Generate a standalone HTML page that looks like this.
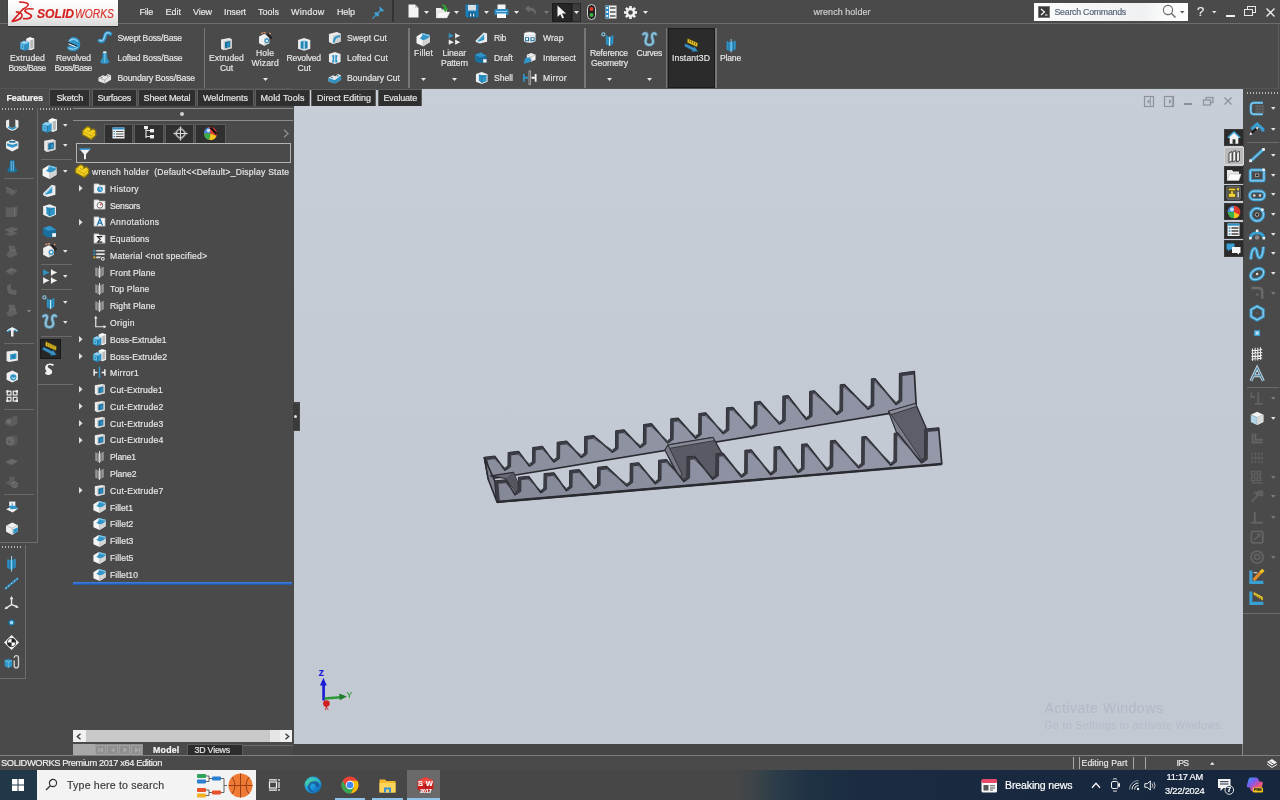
<!DOCTYPE html>
<html><head><meta charset="utf-8"><title>SOLIDWORKS - wrench holder</title>
<style>
html,body{margin:0;padding:0;}
body{width:1280px;height:800px;overflow:hidden;position:relative;background:#4a4a4a;font-family:"Liberation Sans",sans-serif;}
#root{position:absolute;left:0;top:0;width:1280px;height:800px;overflow:hidden;background:#4a4a4a;will-change:transform;}
#root div,#root span.t,#root svg{position:absolute;}
span.t{white-space:pre;display:block;-webkit-text-stroke:0.18px currentColor;}
svg{overflow:visible;}
</style></head><body><div id="root">
<div style="left:293.6px;top:89px;width:949px;height:654.8px;background:linear-gradient(180deg,#c8ced8 0%,#c4cad4 50%,#c3c9d3 100%);"></div>
<div style="left:422px;top:88.5px;width:820.6px;height:1px;background:#c5cbd5;"></div>
<div style="left:293px;top:402px;width:6.8px;height:28.7px;background:#474747;"></div>
<div style="left:294.6px;top:414.3px;width:3.4px;height:3.4px;background:#e2e2e2;border-radius:50%;"></div>
<svg style="left:0px;top:0px;" width="1280" height="800" viewBox="0 0 1280 800"><defs><linearGradient id="gf" x1="0" y1="0" x2="1" y2="0"><stop offset="0" stop-color="#858897"/><stop offset=".45" stop-color="#8d90a0"/><stop offset="1" stop-color="#9598a8"/></linearGradient><linearGradient id="gb" x1="0" y1="0" x2="1" y2="0"><stop offset="0" stop-color="#8a8d9c"/><stop offset=".5" stop-color="#9194a4"/><stop offset="1" stop-color="#8f92a2"/></linearGradient></defs><polygon points="488.5,479.0 484.4,457.5 494.7,456.3 504.9,470.1 508.3,466.8 508.5,452.8 518.4,451.6 529.4,466.0 532.8,462.7 533.0,447.8 542.4,446.7 553.9,461.9 557.3,458.6 557.5,442.5 566.5,441.4 581.4,457.3 584.8,454.0 585.0,436.9 593.5,435.9 612.4,452.1 615.8,448.8 616.0,431.0 623.9,430.1 640.3,447.4 643.7,444.1 643.9,424.8 651.3,423.9 667.5,442.8 670.9,439.5 671.1,419.2 678.0,418.4 695.6,438.1 699.0,434.8 699.2,413.8 705.6,413.0 723.2,433.5 726.6,430.2 726.8,408.2 732.7,407.5 751.2,428.8 754.6,425.5 754.8,402.3 760.1,401.7 779.6,424.0 783.0,420.7 783.2,396.4 788.0,395.8 806.4,419.5 809.8,416.2 810.0,391.5 814.3,391.0 836.9,414.4 840.3,411.1 840.5,385.2 844.3,384.7 868.1,409.1 871.5,405.8 871.7,379.2 874.9,378.8 896.1,404.4 899.5,401.1 899.7,373.5 914.3,371.7 916.2,405.0 915.8,409.2 516.0,475.0 488.5,479.0" fill="url(#gb)" stroke="#2a2b31" stroke-width="1.7" stroke-linejoin="round"/><path d="M489.7,478.7 L485.6,458.7 L495.0,457.5 M505.7,469.0 L509.5,466.0 L509.7,454.0 L518.7,452.8 M530.2,464.9 L534.0,461.9 L534.2,449.0 L542.7,447.9 M554.7,460.8 L558.5,457.8 L558.7,443.7 L566.8,442.6 M582.2,456.2 L586.0,453.2 L586.2,438.1 L593.8,437.1 M613.2,451.0 L617.0,448.0 L617.2,432.2 L624.2,431.3 M641.1,446.3 L644.9,443.3 L645.1,426.0 L651.6,425.1 M668.3,441.7 L672.1,438.7 L672.3,420.4 L678.3,419.6 M696.4,437.0 L700.2,434.0 L700.4,415.0 L705.9,414.2 M724.0,432.4 L727.8,429.4 L728.0,409.4 L733.0,408.7 M752.0,427.7 L755.8,424.7 L756.0,403.5 L760.4,402.9 M780.4,422.9 L784.2,419.9 L784.4,397.6 L788.3,397.0 M807.2,418.4 L811.0,415.4 L811.2,392.7 L814.6,392.2 M837.7,413.3 L841.5,410.3 L841.7,386.4 L844.6,385.9 M868.9,408.0 L872.7,405.0 L872.9,380.4 L875.2,380.0 M896.9,403.3 L900.7,400.3 L900.9,374.7 L913.8,372.9" fill="none" stroke="#3a3b43" stroke-width="3.2" stroke-linejoin="miter"/><path d="M493.7,458.3 L505.1,468.2 M517.4,453.6 L529.6,464.1 M541.4,448.7 L554.1,460.0 M565.5,443.4 L581.6,455.4 M592.5,437.9 L612.6,450.2 M622.9,432.1 L640.5,445.5 M650.3,425.9 L667.7,440.9 M677.0,420.4 L695.8,436.2 M704.6,415.0 L723.4,431.6 M731.7,409.5 L751.4,426.9 M759.1,403.7 L779.8,422.1 M787.0,397.8 L806.6,417.6 M813.3,393.0 L837.1,412.5 M843.3,386.7 L868.3,407.2 M873.9,380.8 L896.3,402.5" fill="none" stroke="#4a4b55" stroke-width=".9"/><polygon points="484.4,457.8 494.8,481 497,502 488.3,479.5" fill="#7c7e8b" stroke="#2a2b31" stroke-width="1.6" stroke-linejoin="round"/><polygon points="490.5,475.8 513.5,472.3 520.8,491 518,494.5 505.5,478.5" fill="#6a6b76" stroke="#2a2b31" stroke-width="1.2" stroke-linejoin="round"/><polygon points="505.5,478.5 513.5,472.3 520.8,491 518,494.5" fill="#55565f"/><polygon points="665,450 668,445 713,437.5 721.5,452.5 722,482 681,482" fill="#595a64" stroke="#2a2b31" stroke-width="1.3" stroke-linejoin="round"/><polygon points="668,445 713,437.5 714.6,440.6 669.5,448.3" fill="#878997" stroke="#2a2b31" stroke-width=".8"/><polygon points="665,450 668,445 669.5,448.3 682,474 680,478" fill="#777986" stroke="#2a2b31" stroke-width=".8"/><polygon points="888.5,411.3 915.5,403.5 926,427.5 927.8,456 920,461.5 896.5,432" fill="#5d5e69" stroke="#2a2b31" stroke-width="1.3" stroke-linejoin="round"/><polygon points="888.5,411.3 915.5,403.5 916.8,406.3 891,414.6" fill="#8b8d9b" stroke="#2a2b31" stroke-width=".8"/><polygon points="888.5,411.3 891,414.6 921.5,459.5 920,461.5 896.5,432" fill="#7b7d8a" stroke="#2a2b31" stroke-width=".8"/><polygon points="497.0,502.0 495.6,481.2 505.9,480.2 515.1,494.7 518.5,491.4 518.7,477.5 528.6,476.5 540.8,492.6 544.2,489.3 544.4,473.9 553.8,473.0 566.4,490.6 569.8,487.3 570.0,470.8 579.0,469.9 594.4,488.4 597.8,485.1 598.0,467.5 606.5,466.7 627.0,485.9 630.4,482.6 630.6,463.8 638.5,463.0 655.3,483.6 658.7,480.3 658.9,460.5 666.3,459.8 683.9,481.4 687.3,478.1 687.5,457.2 694.4,456.5 712.8,479.1 716.2,475.8 716.4,454.0 722.8,453.4 741.6,476.9 745.0,473.6 745.2,450.6 751.1,450.0 770.8,474.6 774.2,471.3 774.4,447.3 779.7,446.8 798.4,472.4 801.8,469.1 802.0,444.6 806.8,444.1 827.1,470.1 830.5,466.8 830.7,441.0 835.0,440.6 858.6,467.7 862.0,464.4 862.2,437.2 866.0,436.8 890.9,465.1 894.3,461.8 894.5,433.5 897.7,433.2 921.6,462.7 925.0,459.4 925.2,429.3 938.7,428.2 941.8,464.0 497.0,502.0" fill="url(#gf)" stroke="#2a2b31" stroke-width="1.7" stroke-linejoin="round"/><path d="M498.2,501.7 L496.8,482.4 L506.2,481.4 M515.9,493.6 L519.7,490.6 L519.9,478.7 L528.9,477.7 M541.6,491.5 L545.4,488.5 L545.6,475.1 L554.1,474.2 M567.2,489.5 L571.0,486.5 L571.2,472.0 L579.3,471.1 M595.2,487.3 L599.0,484.3 L599.2,468.7 L606.8,467.9 M627.8,484.8 L631.6,481.8 L631.8,465.0 L638.8,464.2 M656.1,482.5 L659.9,479.5 L660.1,461.7 L666.6,461.0 M684.7,480.3 L688.5,477.3 L688.7,458.4 L694.7,457.7 M713.6,478.0 L717.4,475.0 L717.6,455.2 L723.1,454.6 M742.4,475.8 L746.2,472.8 L746.4,451.8 L751.4,451.2 M771.6,473.5 L775.4,470.5 L775.6,448.5 L780.0,448.0 M799.2,471.3 L803.0,468.3 L803.2,445.8 L807.1,445.3 M827.9,469.0 L831.7,466.0 L831.9,442.2 L835.3,441.8 M859.4,466.6 L863.2,463.6 L863.4,438.4 L866.3,438.0 M891.7,464.0 L895.5,461.0 L895.7,434.7 L898.0,434.4 M922.4,461.6 L926.2,458.6 L926.4,430.5 L938.2,429.4" fill="none" stroke="#3a3b43" stroke-width="3.2" stroke-linejoin="miter"/><path d="M504.9,482.2 L515.3,492.8 M527.6,478.5 L541.0,490.7 M552.8,475.0 L566.6,488.7 M578.0,471.9 L594.6,486.5 M605.5,468.7 L627.2,484.0 M637.5,465.0 L655.5,481.7 M665.3,461.8 L684.1,479.5 M693.4,458.5 L713.0,477.2 M721.8,455.4 L741.8,475.0 M750.1,452.0 L771.0,472.7 M778.7,448.8 L798.6,470.5 M805.8,446.1 L827.3,468.2 M834.0,442.6 L858.8,465.8 M865.0,438.8 L891.1,463.2 M896.7,435.2 L921.8,460.8" fill="none" stroke="#4a4b55" stroke-width=".9"/><path d="M497,502 L941.8,464" stroke="#2a2b31" stroke-width="2.4"/></svg>
<svg style="left:314px;top:664px;" width="40" height="50" viewBox="0 0 40 50"><path d="M9.6 36.5 V20" stroke="#1c1cd8" stroke-width="2.7"/><path d="M9.4 13.8 L6 21.5 H12.8Z" fill="#1c1cd8"/><path d="M10.5 34.6 L26.5 33.2" stroke="#2b9a36" stroke-width="2.5"/><path d="M32.8 32.4 L25.2 29.6 L25.8 36.2Z" fill="#1f7a2b"/><circle cx="12.4" cy="39.6" r="3.3" fill="#d21f1f"/><path d="M12.8 42 L11.3 46 M11.6 42 L14.3 46" stroke="#d21f1f" stroke-width=".9"/></svg>
<span class="t" style="left:318.70px;top:667.90px;font-size:8.5px;line-height:10.20px;color:#1c1cd8;font-weight:bold;">Z</span>
<span class="t" style="left:346.47px;top:690.20px;font-size:8.5px;line-height:10.20px;color:#2b9a36;">Y</span>
<span class="t" style="left:1044.50px;top:700.48px;font-size:14.2px;line-height:17.04px;color:#b3b9c4;letter-spacing:0.434px;-webkit-text-stroke:0;">Activate Windows</span>
<span class="t" style="left:1044.50px;top:719.82px;font-size:10.3px;line-height:12.36px;color:#b5bbc6;letter-spacing:0.483px;-webkit-text-stroke:0;">Go to Settings to activate Windows.</span>
<svg style="left:1144px;top:96px;" width="10" height="11" viewBox="0 0 10 11"><rect x=".5" y=".5" width="9" height="10" fill="none" stroke="#8c939d" stroke-width="1.25"/><path d="M5.5 3 L3 5.5 L5.5 8Z" fill="#8c939d"/><path d="M6.5 1V10" stroke="#8c939d" stroke-width=".8"/></svg>
<svg style="left:1163.5px;top:96px;" width="10" height="11" viewBox="0 0 10 11"><rect x=".5" y=".5" width="9" height="10" fill="none" stroke="#8c939d" stroke-width="1.25"/><path d="M5 3 L7.5 5.5 L5 8Z" fill="#8c939d"/><path d="M8.3 1V10" stroke="#8c939d" stroke-width=".8"/></svg>
<div style="left:1184.3px;top:103.2px;width:8px;height:2px;background:#8a919b;"></div>
<svg style="left:1203px;top:96.5px;" width="11" height="9" viewBox="0 0 11 9"><rect x="3" y=".5" width="7" height="5" fill="none" stroke="#8c939d" stroke-width="1.25"/><rect x=".5" y="3" width="7" height="5" fill="#c5cbd5" stroke="#8c939d" stroke-width="1.25"/></svg>
<svg style="left:1224px;top:97px;" width="8" height="8" viewBox="0 0 8 8"><path d="M.5 .5 L7.5 7.5 M7.5 .5 L.5 7.5" stroke="#8c939d" stroke-width="1.25"/></svg>
<div style="left:0px;top:23px;width:1280px;height:1px;background:#6e6e6e;"></div>
<div style="left:8px;top:0px;width:110px;height:26px;background:linear-gradient(180deg,#ffffff 0%,#f6f6f6 45%,#d9d9d9 100%);box-shadow:0 1px 1px rgba(0,0,0,.35);"></div>
<svg style="left:11px;top:0.5px;" width="24" height="22" viewBox="0 0 24 22"><g fill="none" stroke="#d5201f" stroke-linecap="round" stroke-linejoin="round"><path d="M8.6 1 C13 1.2 17.6 2 17.2 3.6 C16.8 5.4 13.5 7.4 11.6 8.4" stroke-width="1.5"/><path d="M11.8 8.3 L1.2 20.4 C5 19.8 9.2 18.6 10.6 16 C12 13.4 10.6 11.6 5.4 10.9" stroke-width="1.6"/><path d="M22 8 C19 7.6 14.4 7.6 13.9 9.6 C13.4 11.8 20.6 12.6 20.4 15 C20.2 17.6 16 18 12.6 17.6" stroke-width="1.7"/></g></svg>
<span class="t" style="left:37.30px;top:7.46px;font-size:12.4px;line-height:14.88px;color:#d5201f;font-weight:bold;font-style:italic;transform:scaleX(0.9791);transform-origin:0 50%;">SOLID</span>
<span class="t" style="left:74.80px;top:7.46px;font-size:12.4px;line-height:14.88px;color:#d8302a;font-style:italic;transform:scaleX(0.8304);transform-origin:0 50%;">WORKS</span>
<span class="t" style="left:139.50px;top:6.60px;font-size:9px;line-height:10.80px;color:#e6e6e6;letter-spacing:-0.251px;">File</span>
<span class="t" style="left:165.50px;top:6.60px;font-size:9px;line-height:10.80px;color:#e6e6e6;letter-spacing:-0.002px;">Edit</span>
<span class="t" style="left:193.00px;top:6.60px;font-size:9px;line-height:10.80px;color:#e6e6e6;letter-spacing:-0.086px;">View</span>
<span class="t" style="left:224.00px;top:6.60px;font-size:9px;line-height:10.80px;color:#e6e6e6;letter-spacing:-0.085px;">Insert</span>
<span class="t" style="left:258.00px;top:6.60px;font-size:9px;line-height:10.80px;color:#e6e6e6;letter-spacing:-0.002px;">Tools</span>
<span class="t" style="left:291.00px;top:6.60px;font-size:9px;line-height:10.80px;color:#e6e6e6;letter-spacing:0.248px;">Window</span>
<span class="t" style="left:337.00px;top:6.60px;font-size:9px;line-height:10.80px;color:#e6e6e6;letter-spacing:-0.128px;">Help</span>
<svg style="left:371px;top:5px;" width="15" height="15" viewBox="0 0 16 16"><path d="M9.5 1.5 L14 6 L12.5 7 L10.5 6.5 L8 9 L8.5 11.5 L7 12.5 L3.5 9 L4.5 7.5 L7 8 L9.5 5.5 L9 3Z" fill="#3fa3d6"/><path d="M5.5 10.5 L1.5 14.5" stroke="#3fa3d6" stroke-width="1.3"/></svg>
<div style="left:392px;top:0px;width:2px;height:22px;background:#333;"></div>
<svg style="left:408px;top:4px;" width="11" height="14" viewBox="0 0 11 14"><path d="M.5 .5 H7 L10.5 4 V13.5 H.5Z" fill="#f4f4f4"/><path d="M7 .5 V4 H10.5Z" fill="#c9c9c9"/></svg>
<svg style="left:424px;top:10.5px;" width="5" height="3" viewBox="0 0 5 3"><path d="M0 0 H5 L2.5 3Z" fill="#e8e8e8"/></svg>
<svg style="left:435px;top:3px;" width="16" height="16" viewBox="0 0 16 16"><path d="M1 5 H6 L7 6.5 H12 V15 H1Z" fill="#ededed"/><path d="M3 9 H15 L12 15 H1Z" fill="#f8f8f8" stroke="#bbb" stroke-width=".4"/><path d="M7 1.5 C10 1.5 11.5 3 11.5 5.5 H13.5 L10.5 9 L7.5 5.5 H9.5 C9.5 4 8.5 3 7 3Z" fill="#32a336"/></svg>
<svg style="left:454px;top:10.5px;" width="5" height="3" viewBox="0 0 5 3"><path d="M0 0 H5 L2.5 3Z" fill="#e8e8e8"/></svg>
<svg style="left:465px;top:4px;" width="14" height="14" viewBox="0 0 14 14"><path d="M.5 .5 H13.5 V13.5 H2 L.5 12Z" fill="#1b7fb8"/><rect x="3" y="1" width="8" height="5.5" fill="#d9dfe4"/><rect x="3.5" y="8.5" width="7" height="5" fill="#0e5a88"/><rect x="5" y="9.5" width="1.3" height="3" fill="#dfe8ee"/><rect x="8" y="9.5" width="1.3" height="3" fill="#dfe8ee"/></svg>
<svg style="left:483.5px;top:10.5px;" width="5" height="3" viewBox="0 0 5 3"><path d="M0 0 H5 L2.5 3Z" fill="#e8e8e8"/></svg>
<svg style="left:494px;top:4px;" width="15" height="15" viewBox="0 0 15 15"><rect x="3.5" y=".5" width="8" height="5" fill="#f4f4f4"/><rect x=".5" y="5" width="14" height="6" rx="1" fill="#2b8cc4"/><rect x="3" y="9.5" width="9" height="4.5" fill="#fafafa"/><rect x="2" y="7" width="11" height="1" fill="#9fd2ee"/></svg>
<svg style="left:513.5px;top:10.5px;" width="5" height="3" viewBox="0 0 5 3"><path d="M0 0 H5 L2.5 3Z" fill="#e8e8e8"/></svg>
<svg style="left:524px;top:5px;" width="14" height="11" viewBox="0 0 14 11"><path d="M1 3.5 L5 .5 V2.5 C10 2.5 12.5 5 12 10 C11 7 9 5.5 5 5.5 V7.5Z" fill="#6b6b6b"/></svg>
<svg style="left:543.5px;top:10.5px;" width="5" height="3" viewBox="0 0 5 3"><path d="M0 0 H5 L2.5 3Z" fill="#7a7a7a"/></svg>
<div style="left:552px;top:3px;width:19.5px;height:18.5px;background:#262626;border:1px solid #1b1b1b;box-sizing:border-box;"></div>
<div style="left:571.5px;top:3px;width:9.5px;height:18.5px;background:#3c3c3c;border:1px solid #2b2b2b;box-sizing:border-box;"></div>
<svg style="left:557px;top:5px;" width="10" height="14" viewBox="0 0 10 14"><path d="M.5 .5 V12 L3.3 9.3 L5.3 13.5 L7 12.7 L5 8.6 H9Z" fill="#f6f6f6"/></svg>
<svg style="left:573.5px;top:10.5px;" width="5" height="3" viewBox="0 0 5 3"><path d="M0 0 H5 L2.5 3Z" fill="#e8e8e8"/></svg>
<svg style="left:587px;top:4px;" width="9" height="16" viewBox="0 0 9 16"><rect x=".5" y=".5" width="8" height="15" rx="4" fill="#222" stroke="#d8d8d8" stroke-width="1"/><circle cx="4.5" cy="5" r="2" fill="#e33a2c"/><circle cx="4.5" cy="11" r="2" fill="#3cb043"/></svg>
<svg style="left:605px;top:5px;" width="12" height="14" viewBox="0 0 12 14"><rect x=".5" y=".5" width="11" height="13" fill="#f0f0f0"/><rect x=".5" y=".5" width="3.5" height="13" fill="#2b8cc4"/><path d="M5 3h5.5M5 7h5.5M5 11h5.5" stroke="#555" stroke-width="1.4"/><rect x="1.3" y="2" width="1.8" height="1.8" fill="#fff"/><rect x="1.3" y="6" width="1.8" height="1.8" fill="#fff"/><rect x="1.3" y="10" width="1.8" height="1.8" fill="#fff"/></svg>
<svg style="left:624px;top:5.5px;" width="13" height="13" viewBox="0 0 13 13"><g transform="translate(6.5 6.5)"><g fill="#f2f2f2"><rect x="-1.3" y="-6.5" width="2.6" height="13"/><rect x="-1.3" y="-6.5" width="2.6" height="13" transform="rotate(45)"/><rect x="-1.3" y="-6.5" width="2.6" height="13" transform="rotate(90)"/><rect x="-1.3" y="-6.5" width="2.6" height="13" transform="rotate(135)"/><circle r="4.6"/></g><circle r="2.3" fill="#4a4a4a"/></g></svg>
<svg style="left:642.5px;top:10.5px;" width="5" height="3" viewBox="0 0 5 3"><path d="M0 0 H5 L2.5 3Z" fill="#e8e8e8"/></svg>
<span class="t" style="left:813.50px;top:6.60px;font-size:9px;line-height:10.80px;color:#cdcdcd;letter-spacing:0.036px;">wrench holder</span>
<div style="left:1034px;top:3px;width:153.5px;height:17.5px;background:linear-gradient(90deg,#fdfdfd 0%,#eef0f2 70%,#fbfbfb 85%,#fdfdfd 100%);"></div>
<div style="left:1038px;top:5.5px;width:12px;height:12px;background:#3a3a3a;border:1px solid #777;box-sizing:border-box;"></div>
<svg style="left:1040px;top:7.5px;" width="8" height="8" viewBox="0 0 8 8"><path d="M1 1 L4.5 4 L1 7 M5 7 H7.5" stroke="#fff" stroke-width="1.1" fill="none"/></svg>
<span class="t" style="left:1054.50px;top:6.72px;font-size:8.8px;line-height:10.56px;color:#566577;letter-spacing:-0.255px;">Search Commands</span>
<svg style="left:1162px;top:4px;" width="15" height="15" viewBox="0 0 15 15"><circle cx="6" cy="6" r="4.6" fill="none" stroke="#666" stroke-width="1.1"/><path d="M9.3 9.3 L13.5 13.5" stroke="#666" stroke-width="1.4"/></svg>
<svg style="left:1180.25px;top:10.7px;" width="4.5" height="2.6" viewBox="0 0 4.5 2.6"><path d="M0 0 H4.5 L2.25 2.6Z" fill="#555"/></svg>
<span class="t" style="left:1196.88px;top:4.20px;font-size:13px;line-height:15.60px;color:#f0f0f0;">?</span>
<svg style="left:1212.25px;top:10.7px;" width="4.5" height="2.6" viewBox="0 0 4.5 2.6"><path d="M0 0 H4.5 L2.25 2.6Z" fill="#e8e8e8"/></svg>
<div style="left:1226px;top:14.5px;width:8.5px;height:2px;background:#f0f0f0;"></div>
<svg style="left:1244px;top:6px;" width="12" height="10" viewBox="0 0 12 10"><rect x="3.5" y=".5" width="8" height="6" fill="none" stroke="#e8e8e8" stroke-width="1"/><rect x=".5" y="3.5" width="8" height="6" fill="#4a4a4a" stroke="#e8e8e8" stroke-width="1"/></svg>
<svg style="left:1266px;top:7.5px;" width="9" height="9" viewBox="0 0 9 9"><path d="M.5 .5 L8.5 8.5 M8.5 .5 L.5 8.5" stroke="#f0f0f0" stroke-width="1.3"/></svg>
<svg style="left:18.849px;top:35.849px;" width="16.302" height="16.302" viewBox="0 0 16 16"><path d="M7 3 L10.5 1.2 L15 2.5 L15 12.5 L11.5 14 L7 12.5Z" fill="#ececec"/><path d="M11 4.2 L14 3.3 V11.5 L11 12.7Z" fill="#b9b9b9"/><path d="M7 3 L10.5 1.2 L15 2.5 L11.5 4Z" fill="#fafafa"/><path d="M1 6.8 L4.8 4.6 L10 6 L10 12.3 L6 14.8 L1 13Z" fill="#3094c7"/><path d="M1 6.8 L6 8.3 L10 6 L4.8 4.6Z" fill="#8fd0ee"/><path d="M6 8.3V14.8" stroke="#1a6f9c" stroke-width=".7"/><path d="M2.2 8.5 L4.8 9.3 V12.8 L2.2 12Z" fill="none" stroke="#8fd0ee" stroke-width=".6"/></svg>
<span class="t" style="left:10.00px;top:52.84px;font-size:8.6px;line-height:10.32px;color:#e6e6e6;letter-spacing:0.072px;">Extruded</span>
<span class="t" style="left:8.50px;top:62.84px;font-size:8.6px;line-height:10.32px;color:#e6e6e6;letter-spacing:-0.401px;">Boss/Base</span>
<svg style="left:64.849px;top:35.849px;" width="16.302" height="16.302" viewBox="0 0 16 16"><path d="M8 1 C12.5 1 15 4.5 15 8.2 C15 12.5 11.5 15.5 7.5 15 C4 14.5 1.5 12.5 2 10.5 L8 8.5 L3 6.5 C3.5 3.5 5.5 1 8 1Z" fill="#3094c7"/><path d="M4 5 C6 2.5 10.5 2.5 12.5 5.5" stroke="#8fd0ee" stroke-width="1.3" fill="none"/><path d="M3.5 11.5 C6 13.5 10 13.5 12.5 11" stroke="#8fd0ee" stroke-width="1.1" fill="none"/><path d="M3 6.3 L11.5 9.8" stroke="#1c1c1c" stroke-width="1.1"/><path d="M3.3 7.6 L10.5 10.6" stroke="#eee" stroke-width="1"/></svg>
<span class="t" style="left:56.00px;top:52.84px;font-size:8.6px;line-height:10.32px;color:#e6e6e6;letter-spacing:-0.107px;">Revolved</span>
<span class="t" style="left:54.50px;top:62.84px;font-size:8.6px;line-height:10.32px;color:#e6e6e6;letter-spacing:-0.401px;">Boss/Base</span>
<svg style="left:96.748px;top:30.248px;" width="15.504" height="15.504" viewBox="0 0 16 16"><path d="M2.5 11 C7 13.5 7.5 9 8.5 5.5 C9.2 2.8 12 2.2 13.8 4" stroke="#2b8cc0" stroke-width="4" fill="none" stroke-linecap="round"/><path d="M2.5 10.6 C7 12.8 7.3 8.5 8.3 5.2 C9 2.6 11.8 2 13.5 3.6" stroke="#8fd0ee" stroke-width="1.5" fill="none" stroke-linecap="round"/></svg>
<span class="t" style="left:117.50px;top:33.14px;font-size:8.6px;line-height:10.32px;color:#e6e6e6;letter-spacing:-0.194px;">Swept Boss/Base</span>
<svg style="left:96.748px;top:50.248px;" width="15.504" height="15.504" viewBox="0 0 16 16"><path d="M6 2 h4 L10.5 8 L13 13 Q8 15.5 3 13 L5.5 8Z" fill="#3094c7"/><ellipse cx="8" cy="2.3" rx="2" ry=".9" fill="#eee"/><path d="M8 3v10" stroke="#8fd0ee" stroke-width=".8"/></svg>
<span class="t" style="left:117.50px;top:53.14px;font-size:8.6px;line-height:10.32px;color:#e6e6e6;letter-spacing:-0.151px;">Lofted Boss/Base</span>
<svg style="left:96.748px;top:69.748px;" width="15.504" height="15.504" viewBox="0 0 16 16"><path d="M1.5 8 L6 5.5 L9 6.5 L11 4 L14.5 5.5 L14.5 10 L8 14 L1.5 11.5Z" fill="#e6e6e6"/><path d="M1.5 8 L8 10.5 L14.5 5.5 M8 10.5V14" stroke="#9a9a9a" stroke-width=".7" fill="none"/><circle cx="5" cy="7.7" r=".8" fill="#777"/><circle cx="11" cy="6" r=".8" fill="#777"/></svg>
<span class="t" style="left:117.50px;top:72.64px;font-size:8.6px;line-height:10.32px;color:#e6e6e6;letter-spacing:-0.156px;">Boundary Boss/Base</span>
<div style="left:203.5px;top:28px;width:1.3px;height:60px;background:#767676;"></div>
<svg style="left:218.349px;top:35.849px;" width="16.302" height="16.302" viewBox="0 0 16 16"><path d="M3 3.5 L11 2 L13.5 3 L13.5 12 L5.5 14 L3 12.5Z" fill="#ececec"/><path d="M5.5 5 L13.5 3 V12 L5.5 14Z" fill="#cfcfcf"/><path d="M6.8 6 L12 4.8 V10.8 L6.8 12Z" fill="#1a6f9c"/><path d="M9 7 l2.2 -.4 v3.6 l-2.2 .4z" fill="#3094c7"/></svg>
<span class="t" style="left:209.00px;top:52.84px;font-size:8.6px;line-height:10.32px;color:#e6e6e6;letter-spacing:0.072px;">Extruded</span>
<span class="t" style="left:220.00px;top:62.84px;font-size:8.6px;line-height:10.32px;color:#e6e6e6;letter-spacing:-0.128px;">Cut</span>
<svg style="left:256.849px;top:30.849px;" width="16.302" height="16.302" viewBox="0 0 16 16"><path d="M2 5.5 L7 3 L12 5 L12 12 L7 14.5 L2 12Z" fill="#f0f0f0"/><path d="M7 7.5 L12 5 V12 L7 14.5Z" fill="#d4d4d4"/><circle cx="9.6" cy="9.6" r="2.4" fill="#3094c7"/><circle cx="9.6" cy="9.6" r="1.1" fill="#fff"/><path d="M10 3 L14.5 7.5" stroke="#222" stroke-width="2.4"/><path d="M4 2.5 l2-.8 M6.5 1.5 l2 .3 M12 2 l1.5 .8" stroke="#e8956a" stroke-width="1.2"/></svg>
<span class="t" style="left:256.00px;top:47.84px;font-size:8.6px;line-height:10.32px;color:#e6e6e6;letter-spacing:0.078px;">Hole</span>
<span class="t" style="left:251.50px;top:57.84px;font-size:8.6px;line-height:10.32px;color:#e6e6e6;letter-spacing:0.124px;">Wizard</span>
<svg style="left:262.5px;top:77.5px;" width="5" height="3" viewBox="0 0 5 3"><path d="M0 0 H5 L2.5 3Z" fill="#e8e8e8"/></svg>
<svg style="left:295.849px;top:35.849px;" width="16.302" height="16.302" viewBox="0 0 16 16"><path d="M2 4 L8 2 L14 4 V12.5 L8 14.5 L2 12.5Z" fill="#ececec"/><path d="M4.5 5.5 L8 4.5 L11.5 5.5 V12 L8 13 L4.5 12Z" fill="#3094c7"/><path d="M8 4.5V13" stroke="#fff" stroke-width=".8"/><path d="M6 6v6M10 6v6" stroke="#1a6f9c" stroke-width=".8"/></svg>
<span class="t" style="left:286.50px;top:52.84px;font-size:8.6px;line-height:10.32px;color:#e6e6e6;letter-spacing:-0.169px;">Revolved</span>
<span class="t" style="left:297.50px;top:62.84px;font-size:8.6px;line-height:10.32px;color:#e6e6e6;letter-spacing:0.039px;">Cut</span>
<svg style="left:326.748px;top:30.248px;" width="15.504" height="15.504" viewBox="0 0 16 16"><path d="M2 4 L10 2 L14 3.5 V12 L6 14.5 L2 12.5Z" fill="#ececec"/><path d="M6 6 L14 3.5 V12 L6 14.5Z" fill="#d0d0d0"/><path d="M7 13 C7 8 10 6.5 13.5 6.5" stroke="#3094c7" stroke-width="2.2" fill="none"/></svg>
<span class="t" style="left:347.00px;top:33.14px;font-size:8.6px;line-height:10.32px;color:#e6e6e6;letter-spacing:0.036px;">Swept Cut</span>
<svg style="left:326.748px;top:50.248px;" width="15.504" height="15.504" viewBox="0 0 16 16"><path d="M2 4 L8 2 L14 4 V12.5 L8 14.5 L2 12.5Z" fill="#ececec"/><path d="M5 5.5 h6 L10 9 L11 13 H5 L6 9Z" fill="#3094c7"/><path d="M8 5.5V13" stroke="#fff" stroke-width=".9"/></svg>
<span class="t" style="left:347.00px;top:53.14px;font-size:8.6px;line-height:10.32px;color:#e6e6e6;letter-spacing:0.132px;">Lofted Cut</span>
<svg style="left:326.748px;top:70.248px;" width="15.504" height="15.504" viewBox="0 0 16 16"><path d="M1.5 8 L6 5.5 L9 6.5 L11 4 L14.5 5.5 L14.5 10 L8 14 L1.5 11.5Z" fill="#e6e6e6"/><path d="M1.5 8 L8 10.5 L14.5 5.5 V10 L8 14 L1.5 11.5Z" fill="#3094c7"/><path d="M8 10.5V14" stroke="#1a6f9c" stroke-width=".7"/><circle cx="5" cy="7.7" r=".8" fill="#1a6f9c"/><circle cx="11" cy="6" r=".8" fill="#1a6f9c"/></svg>
<span class="t" style="left:347.00px;top:73.14px;font-size:8.6px;line-height:10.32px;color:#e6e6e6;letter-spacing:0.034px;">Boundary Cut</span>
<div style="left:408.3px;top:28px;width:1.3px;height:60px;background:#767676;"></div>
<svg style="left:415.149px;top:30.849px;" width="16.302" height="16.302" viewBox="0 0 16 16"><path d="M1.5 5.5 L7 2 L14.5 4 V11 L8 15 L1.5 12Z" fill="#f4f4f4"/><path d="M8 9 L14.5 6 V11 L8 15Z" fill="#d4d4d4"/><path d="M7 2 L14.5 4 Q14.8 7.5 8 9 L4.5 7.2 Q8 5.5 7 2Z" fill="#3094c7"/><path d="M7.5 3 L13.8 4.6" stroke="#8fd0ee" stroke-width="1"/><path d="M8 9V15" stroke="#b5b5b5" stroke-width=".6"/></svg>
<span class="t" style="left:414.00px;top:47.84px;font-size:8.6px;line-height:10.32px;color:#e6e6e6;letter-spacing:0.140px;">Fillet</span>
<svg style="left:420.8px;top:77.5px;" width="5" height="3" viewBox="0 0 5 3"><path d="M0 0 H5 L2.5 3Z" fill="#e8e8e8"/></svg>
<svg style="left:447.289px;top:32.289px;" width="14.022" height="14.022" viewBox="0 0 16 16"><path d="M2 1.5 h1.3 v.7 l4.6 2.1 l-4.6 2.1 v.7 h-1.3z" fill="#3094c7"/><path d="M9.3 1.5 h1.3 v.7 l4.6 2.1 l-4.6 2.1 v.7 h-1.3z" fill="#f2f2f2"/><path d="M2 8.8 h1.3 v.7 l4.6 2.1 l-4.6 2.1 v.7 h-1.3z" fill="#f2f2f2"/><path d="M9.3 8.8 h1.3 v.7 l4.6 2.1 l-4.6 2.1 v.7 h-1.3z" fill="#f2f2f2"/></svg>
<span class="t" style="left:442.50px;top:47.84px;font-size:8.6px;line-height:10.32px;color:#e6e6e6;letter-spacing:-0.068px;">Linear</span>
<span class="t" style="left:441.00px;top:57.84px;font-size:8.6px;line-height:10.32px;color:#e6e6e6;letter-spacing:-0.104px;">Pattern</span>
<svg style="left:451.8px;top:77.5px;" width="5" height="3" viewBox="0 0 5 3"><path d="M0 0 H5 L2.5 3Z" fill="#e8e8e8"/></svg>
<svg style="left:474.248px;top:30.248px;" width="15.504" height="15.504" viewBox="0 0 16 16"><path d="M2 10.5 L10 2.5 L13.5 3.5 V12 L6 14 L2 12.5Z" fill="#ececec"/><path d="M3.5 11 L10.5 4 L10.5 10 L5 12Z" fill="#3094c7"/><path d="M4 11 L10 5" stroke="#8fd0ee" stroke-width="1"/></svg>
<span class="t" style="left:494.00px;top:33.14px;font-size:8.6px;line-height:10.32px;color:#e6e6e6;letter-spacing:-0.302px;">Rib</span>
<svg style="left:473.248px;top:50.248px;" width="15.504" height="15.504" viewBox="0 0 16 16"><path d="M2 5 L8 2.5 L14 6 V13 L6 13.5 L2 11Z" fill="#1a6f9c"/><path d="M2 5 L8 2.5 L14 6 L7 7.5Z" fill="#3094c7"/><path d="M10.5 9.5 h3.5 v3.5 h-3.5z" fill="#f4f4f4"/></svg>
<span class="t" style="left:494.00px;top:53.14px;font-size:8.6px;line-height:10.32px;color:#e6e6e6;letter-spacing:0.073px;">Draft</span>
<svg style="left:474.248px;top:69.748px;" width="15.504" height="15.504" viewBox="0 0 16 16"><path d="M2 4 L8 2 L14 4.5 V12 L8 14.5 L2 12Z" fill="#f0f0f0"/><path d="M5 5 L13 5.5 V11.5 L8 13.5 L5 11Z" fill="#3094c7"/><path d="M8 7 L13 5.5 M8 7 V13.5 M8 7 L5 5" stroke="#1a6f9c" stroke-width=".7"/></svg>
<span class="t" style="left:494.00px;top:72.64px;font-size:8.6px;line-height:10.32px;color:#e6e6e6;letter-spacing:-0.025px;">Shell</span>
<svg style="left:522.248px;top:30.248px;" width="15.504" height="15.504" viewBox="0 0 16 16"><path d="M2 4 V11.5 Q8 15 14 11.5 V4Z" fill="#f0f0f0"/><ellipse cx="8" cy="4" rx="6" ry="2" fill="#fafafa" stroke="#bbb" stroke-width=".5"/><path d="M3 7.5 h4.3 v4 h-4.3z M8.7 7.5 h4.3 v4 h-4.3z" fill="#1a6f9c"/><path d="M4 8.3h2.2v2.4h-2.2z M9.8 8.3h2.2v2.4h-2.2z" fill="#e8f4fa"/></svg>
<span class="t" style="left:543.00px;top:33.14px;font-size:8.6px;line-height:10.32px;color:#e6e6e6;letter-spacing:0.027px;">Wrap</span>
<svg style="left:522.248px;top:50.248px;" width="15.504" height="15.504" viewBox="0 0 16 16"><path d="M5 5 L9.5 3 L14 5 V10 L9.5 12 L5 10Z" fill="#f0f0f0"/><path d="M5 5 L9.5 7 L14 5 M9.5 7V12" stroke="#aaa" stroke-width=".6" fill="none"/><path d="M1.5 14 L3.5 8 L8 7.5 L10 11 L6 13.5Z" fill="#3094c7"/></svg>
<span class="t" style="left:543.00px;top:53.14px;font-size:8.6px;line-height:10.32px;color:#e6e6e6;letter-spacing:0.002px;">Intersect</span>
<svg style="left:522.248px;top:70.248px;" width="15.504" height="15.504" viewBox="0 0 16 16"><path d="M1 4 h1.8 v3 h3.4 v2 h-3.4 v3 h-1.8z" fill="#3094c7"/><path d="M15 4 h-1.8 v3 h-3.4 v2 h3.4 v3 h1.8z" fill="#f2f2f2"/><path d="M7.2 .8 h1.6 v14.4 h-1.6z" fill="#4a4a4a" stroke="#e0e0e0" stroke-width=".6"/></svg>
<span class="t" style="left:543.00px;top:73.14px;font-size:8.6px;line-height:10.32px;color:#e6e6e6;letter-spacing:0.258px;">Mirror</span>
<div style="left:584.3px;top:28px;width:1.3px;height:60px;background:#767676;"></div>
<svg style="left:600.45px;top:30.95px;" width="17.1" height="17.1" viewBox="0 0 16 16"><path d="M5.5 4 L9 5.5 L12.5 3.5 V12 L9 14 L5.5 12.5Z" fill="#3094c7"/><path d="M9 5.5V14" stroke="#e8f4fa" stroke-width=".9"/><path d="M7.2 5v8M10.8 5v8" stroke="#1a6f9c" stroke-width=".7" stroke-dasharray="1.2 1"/><circle cx="3.2" cy="3.2" r="1.5" fill="none" stroke="#8fd0ee" stroke-width="1"/></svg>
<span class="t" style="left:590.00px;top:47.84px;font-size:8.6px;line-height:10.32px;color:#e6e6e6;letter-spacing:-0.187px;">Reference</span>
<span class="t" style="left:591.00px;top:57.84px;font-size:8.6px;line-height:10.32px;color:#e6e6e6;letter-spacing:-0.095px;">Geometry</span>
<svg style="left:606.5px;top:77.5px;" width="5" height="3" viewBox="0 0 5 3"><path d="M0 0 H5 L2.5 3Z" fill="#e8e8e8"/></svg>
<svg style="left:640.564px;top:31.164px;" width="16.872" height="16.872" viewBox="0 0 16 16"><path d="M2.2 3 C4 1.2 6.3 2.3 5.6 4.8 C4.8 7.5 3.6 9.2 4.6 11.5 C5.6 13.8 9.8 14 11.2 11.5 C12.4 9.2 10.2 7.2 10.4 4.8 C10.6 2.2 12.6 1.4 14 3" stroke="#4f7f99" stroke-width="3.3" fill="none" stroke-linecap="round"/><path d="M2.2 3 C4 1.2 6.3 2.3 5.6 4.8 C4.8 7.5 3.6 9.2 4.6 11.5 C5.6 13.8 9.8 14 11.2 11.5 C12.4 9.2 10.2 7.2 10.4 4.8 C10.6 2.2 12.6 1.4 14 3" stroke="#8ec0d8" stroke-width="1.9" fill="none" stroke-linecap="round"/></svg>
<span class="t" style="left:636.50px;top:47.84px;font-size:8.6px;line-height:10.32px;color:#e6e6e6;letter-spacing:-0.290px;">Curves</span>
<svg style="left:646.5px;top:77.5px;" width="5" height="3" viewBox="0 0 5 3"><path d="M0 0 H5 L2.5 3Z" fill="#e8e8e8"/></svg>
<div style="left:666.2px;top:28px;width:1.3px;height:60px;background:#767676;"></div>
<div style="left:668px;top:28px;width:46.5px;height:60px;background:#2b2b2b;border:1px solid #1c1c1c;box-sizing:border-box;"></div>
<div style="left:715.3px;top:28px;width:1.3px;height:60px;background:#767676;"></div>
<svg style="left:682.849px;top:36.849px;" width="16.302" height="16.302" viewBox="0 0 16 16"><path d="M4.5 1.5 L14.5 6 L14 9.8 L4 5.3Z" fill="#e9c62c" stroke="#5c4d08" stroke-width=".6"/><path d="M6.3 3.2v1.8M8.3 4.1v1.8M10.3 5v1.8M12.3 5.9v1.8" stroke="#4a3d00" stroke-width=".7"/><path d="M2.2 6.5 L10.5 10.5 L11.2 9.3 L14.5 14 L8.5 14.3 L9.3 13 L1.5 9Z" fill="#3b93c6" stroke="#1d5d85" stroke-width=".5"/></svg>
<span class="t" style="left:672.00px;top:52.84px;font-size:8.6px;line-height:10.32px;color:#e6e6e6;letter-spacing:0.132px;">Instant3D</span>
<svg style="left:722.849px;top:36.849px;" width="16.302" height="16.302" viewBox="0 0 16 16"><path d="M3.5 4 L8 5.5 L12.5 3.5 V12 L8 14 L3.5 12.5Z" fill="#3094c7"/><path d="M8 2V15" stroke="#8fd0ee" stroke-width="1"/><path d="M5.7 5v8M10.3 5v8" stroke="#1a6f9c" stroke-width=".7"/></svg>
<span class="t" style="left:720.00px;top:52.84px;font-size:8.6px;line-height:10.32px;color:#e6e6e6;letter-spacing:-0.199px;">Plane</span>
<div style="left:1278.2px;top:24px;width:1px;height:65px;background:#5c5c5c;"></div>
<div style="left:0px;top:88px;width:1279px;height:0.8px;background:#545454;"></div>
<div style="left:293px;top:88px;width:129.3px;height:2px;background:#4a4a4a;"></div>
<span class="t" style="left:6.50px;top:92.60px;font-size:9px;line-height:10.80px;color:#f4f4f4;letter-spacing:-0.127px;font-weight:bold;">Features</span>
<div style="left:49px;top:88.8px;width:41.3px;height:17px;background:#2f2f2f;border:1px solid #5e5e5e;border-bottom:none;box-sizing:border-box;"></div>
<span class="t" style="left:56.50px;top:92.60px;font-size:9px;line-height:10.80px;color:#e6e6e6;letter-spacing:-0.169px;">Sketch</span>
<div style="left:91.5px;top:88.8px;width:45px;height:17px;background:#2f2f2f;border:1px solid #5e5e5e;border-bottom:none;box-sizing:border-box;"></div>
<span class="t" style="left:97.50px;top:92.60px;font-size:9px;line-height:10.80px;color:#e6e6e6;letter-spacing:-0.252px;">Surfaces</span>
<div style="left:137.5px;top:88.8px;width:58.5px;height:17px;background:#2f2f2f;border:1px solid #5e5e5e;border-bottom:none;box-sizing:border-box;"></div>
<span class="t" style="left:143.50px;top:92.60px;font-size:9px;line-height:10.80px;color:#e6e6e6;letter-spacing:-0.094px;">Sheet Metal</span>
<div style="left:197px;top:88.8px;width:56.7px;height:17px;background:#2f2f2f;border:1px solid #5e5e5e;border-bottom:none;box-sizing:border-box;"></div>
<span class="t" style="left:203.00px;top:92.60px;font-size:9px;line-height:10.80px;color:#e6e6e6;letter-spacing:0.016px;">Weldments</span>
<div style="left:255.3px;top:88.8px;width:54.4px;height:17px;background:#2f2f2f;border:1px solid #5e5e5e;border-bottom:none;box-sizing:border-box;"></div>
<span class="t" style="left:260.50px;top:92.60px;font-size:9px;line-height:10.80px;color:#e6e6e6;letter-spacing:0.114px;">Mold Tools</span>
<div style="left:311.3px;top:88.8px;width:64.7px;height:17px;background:#2f2f2f;border:1px solid #5e5e5e;border-bottom:none;box-sizing:border-box;"></div>
<span class="t" style="left:317.00px;top:92.60px;font-size:9px;line-height:10.80px;color:#e6e6e6;letter-spacing:0.034px;">Direct Editing</span>
<div style="left:377.5px;top:88.8px;width:44.5px;height:17px;background:#2f2f2f;border:1px solid #5e5e5e;border-bottom:none;box-sizing:border-box;"></div>
<span class="t" style="left:383.50px;top:92.60px;font-size:9px;line-height:10.80px;color:#e6e6e6;letter-spacing:-0.191px;">Evaluate</span>
<div style="left:2px;top:107.8px;width:33px;height:2px;background-image:repeating-linear-gradient(90deg,#c8c8c8 0,#c8c8c8 1.3px,transparent 1.3px,transparent 3px);opacity:.85;"></div>
<div style="left:40px;top:107.8px;width:32px;height:2px;background-image:repeating-linear-gradient(90deg,#c8c8c8 0,#c8c8c8 1.3px,transparent 1.3px,transparent 3px);opacity:.85;"></div>
<div style="left:36.6px;top:108px;width:1.1px;height:435.3px;background:#6a6a6a;"></div>
<div style="left:0px;top:542.2px;width:37.5px;height:1.1px;background:#6f6f6f;"></div>
<svg style="left:3.735px;top:116.735px;" width="16.53" height="16.53" viewBox="0 0 16 16"><path d="M2 3.5 L5 2.5 L5 9 Q8 12.5 11 9 L11 2.5 L14 3.5 L14 10 Q8 16.5 2 10Z" fill="#ededed"/><path d="M5 9 Q8 12.5 11 9 L12.5 10 Q8 14.5 3.5 10Z" fill="#3094c7"/></svg>
<svg style="left:3.735px;top:137.035px;" width="16.53" height="16.53" viewBox="0 0 16 16"><path d="M2 4.5 L8 2.5 L14 4.5 V11 L8 14 L2 11Z" fill="#ededed"/><path d="M3 6 L8 7.5 L13 6 V8.5 L8 10.5 L3 8.5Z" fill="#3094c7"/><path d="M5 3.8 L11 3.8 L11 5.5 L5 5.5Z" fill="#1a6f9c"/></svg>
<svg style="left:3.735px;top:157.735px;" width="16.53" height="16.53" viewBox="0 0 16 16"><path d="M6 2 h4 L10.8 9 L13.5 12.5 Q8 15.5 2.5 12.5 L5.2 9Z" fill="#1a6f9c"/><path d="M7 3v9.5M9 3v9.5" stroke="#8fd0ee" stroke-width=".8"/></svg>
<div style="left:4px;top:178px;width:30px;height:1px;background:#6a6a6a;"></div>
<svg style="left:3.45px;top:182.95px;opacity:0.8;" width="17.1" height="17.1" viewBox="0 0 16 16"><path d="M3 4 L9 7 L13 6 L13 9 L8 12 L3 9Z" fill="#626262"/><path d="M3 4 L9 7 L9 10" stroke="#808080" stroke-width=".8" fill="none"/></svg>
<svg style="left:3.45px;top:203.45px;opacity:0.8;" width="17.1" height="17.1" viewBox="0 0 16 16"><path d="M2.5 4 H11 L13.5 2.5 V11 L11 13 H2.5Z" fill="#636363"/><path d="M11 4V13" stroke="#858585" stroke-width=".7"/></svg>
<svg style="left:3.45px;top:223.45px;opacity:0.8;" width="17.1" height="17.1" viewBox="0 0 16 16"><path d="M2 6 L9 3.5 L14 5.5 L7 8.5Z M2 10 L7 12.5 L14 9.5 L9 8Z" fill="#686868"/><path d="M2 6 L7 8.5 L14 5.5" stroke="#7f7f7f" stroke-width=".7" fill="none"/></svg>
<svg style="left:3.45px;top:242.95px;opacity:0.8;" width="17.1" height="17.1" viewBox="0 0 16 16"><path d="M5 2.5 L11 2.5 L12 7 L13.5 11 L6 14 L3 11 L6 7Z" fill="#676767"/><path d="M6 7 L12 7" stroke="#7e7e7e" stroke-width=".7"/></svg>
<svg style="left:3.45px;top:262.45px;opacity:0.8;" width="17.1" height="17.1" viewBox="0 0 16 16"><path d="M2 9 L8 5 L14 8 L8 12.5Z" fill="#626262"/><path d="M4 9 L8 6.5 L12 8.3 M5 10 L9 7.5" stroke="#7f7f7f" stroke-width=".7" fill="none"/></svg>
<svg style="left:3.45px;top:281.45px;opacity:0.8;" width="17.1" height="17.1" viewBox="0 0 16 16"><path d="M4 4 Q3 9 6 12 L12 13 L13 9 L8 8 Q7 5 7.5 3Z" fill="#686868"/></svg>
<svg style="left:3.45px;top:301.95px;opacity:0.8;" width="17.1" height="17.1" viewBox="0 0 16 16"><path d="M5 2.5 L11 2.5 L12 7 L13.5 11 L6 14 L3 11 L6 7Z" fill="#676767"/><path d="M6 7 L12 7" stroke="#7e7e7e" stroke-width=".7"/></svg>
<svg style="left:3.735px;top:322.235px;" width="16.53" height="16.53" viewBox="0 0 16 16"><path d="M2 9 Q8 2 14 9 L12 10 Q8 6 4 10Z" fill="#3094c7"/><path d="M3 8.5 Q8 3.5 13 8.5" stroke="#e8f4fa" stroke-width="1" fill="none"/><path d="M6.8 7.5 h2.4 v6.5 h-2.4z" fill="#f2f2f2"/><path d="M8 4.5 L11 8 H5Z" fill="#f2f2f2"/></svg>
<div style="left:4px;top:343px;width:30px;height:1px;background:#6a6a6a;"></div>
<svg style="left:3.735px;top:347.735px;" width="16.53" height="16.53" viewBox="0 0 16 16"><path d="M2.5 3.5 L11 2.5 L13.5 3.5 V12 L5 13.5 L2.5 12.5Z" fill="#ededed"/><path d="M6 6 L12 5 V10.5 L6 11.5Z" fill="#3094c7"/><path d="M10 6.5 L7.5 8.5 L10 10Z" fill="#1a6f9c"/></svg>
<svg style="left:3.735px;top:367.735px;" width="16.53" height="16.53" viewBox="0 0 16 16"><path d="M2.5 5 L8 2.5 L13.5 5 V11.5 L8 14 L2.5 11.5Z" fill="#f0f0f0"/><circle cx="9" cy="9" r="3" fill="#3094c7"/><path d="M8 9 a1.3 1.3 0 1 0 2.6 0" stroke="#fff" stroke-width=".9" fill="none"/></svg>
<svg style="left:4.875px;top:389.175px;" width="14.25" height="14.25" viewBox="0 0 16 16"><g fill="none" stroke="#f0f0f0" stroke-width="1.3"><rect x="2.5" y="2.5" width="4.2" height="4.2"/><rect x="9.3" y="2.5" width="4.2" height="4.2"/><rect x="2.5" y="9.3" width="4.2" height="4.2"/><rect x="9.3" y="9.3" width="4.2" height="4.2"/></g><path d="M1.5 1.5 h2.5v2.5h-2.5z M12 1.5 h2.5v2.5h-2.5z M1.5 12 h2.5v2.5h-2.5z M12 12h2.5v2.5h-2.5z" fill="#f0f0f0"/></svg>
<div style="left:4px;top:408.8px;width:30px;height:1px;background:#6a6a6a;"></div>
<svg style="left:3.45px;top:412.45px;opacity:0.8;" width="17.1" height="17.1" viewBox="0 0 16 16"><path d="M2 8 L6 5 L9 6 L9 3 L13.5 4.5 V11 L8 13.5 L2 11.5Z" fill="#626262"/><circle cx="5.5" cy="9" r="2" fill="#7c7c7c"/></svg>
<svg style="left:3.45px;top:432.45px;opacity:0.8;" width="17.1" height="17.1" viewBox="0 0 16 16"><path d="M3 5 L9 3 L13.5 4.5 V11.5 L8 13.5 L3 12Z" fill="#5f5f5f"/><circle cx="6.5" cy="8.5" r="3" fill="none" stroke="#808080" stroke-width="1"/><path d="M6.5 5.5v3h3" stroke="#808080" stroke-width=".9" fill="none"/></svg>
<svg style="left:3.45px;top:452.45px;opacity:0.8;" width="17.1" height="17.1" viewBox="0 0 16 16"><path d="M2 9.5 L8 6 L14 8.5 L8 12.5Z" fill="#696969"/><path d="M4 9.5 L9 6.8 M6 10.5 L11 7.6 M8 11.5 L13 8.5" stroke="#7e7e7e" stroke-width=".7"/></svg>
<svg style="left:3.45px;top:473.45px;opacity:0.8;" width="17.1" height="17.1" viewBox="0 0 16 16"><path d="M2 9 L6 7 L6 3.5 L11 3.5 L11 8 L13 9 L8 12.5Z" fill="#626262"/><circle cx="11" cy="11" r="2.6" fill="#5a5a5a" stroke="#858585" stroke-width=".9"/><path d="M9.3 9.3 L12.7 12.7" stroke="#858585" stroke-width=".9"/></svg>
<div style="left:4px;top:493.7px;width:30px;height:1px;background:#6a6a6a;"></div>
<svg style="left:3.735px;top:498.735px;" width="16.53" height="16.53" viewBox="0 0 16 16"><path d="M5 2.5 L11 2.5 L11 7 L5 7Z" fill="#f0f0f0"/><path d="M2 10 L7 7.5 L14 9 L8.5 13Z" fill="#f0f0f0"/><path d="M4.5 6.5 L11.5 6.5 L13.5 9.5 L6.5 10Z" fill="#3094c7"/><path d="M8 4v2.5" stroke="#3094c7" stroke-width="1"/></svg>
<svg style="left:3.735px;top:519.735px;" width="16.53" height="16.53" viewBox="0 0 16 16"><path d="M2 5.5 L8 2.5 L13.5 5 V11 L8 14.5 L2 11.5Z" fill="#f0f0f0"/><path d="M2 5.5 L8 8 L13.5 5 M8 8V14.5" stroke="#a9a9a9" stroke-width=".6" fill="none"/><path d="M9 9 L13.5 7 V11 L9 13.5Z" fill="#3094c7"/></svg>
<svg style="left:26.5px;top:309.75px;" width="4" height="2.5" viewBox="0 0 4 2.5"><path d="M0 0 H4 L2 2.5Z" fill="#8a8a8a"/></svg>
<div style="left:2px;top:546px;width:20px;height:2px;background-image:repeating-linear-gradient(90deg,#c8c8c8 0,#c8c8c8 1.3px,transparent 1.3px,transparent 3px);opacity:.85;"></div>
<div style="left:24.8px;top:545px;width:1.1px;height:134px;background:#6f6f6f;"></div>
<div style="left:0px;top:677.8px;width:25.8px;height:1.1px;background:#6f6f6f;"></div>
<svg style="left:3.45px;top:554.95px;" width="17.1" height="17.1" viewBox="0 0 16 16"><path d="M4 4 L8 5 L12 3.5 V11.5 L8 13.5 L4 12.5Z" fill="#3094c7"/><path d="M8 1V15.5" stroke="#8fd0ee" stroke-width="1"/><path d="M6 4.8v8M10 4.6v8" stroke="#1a6f9c" stroke-width=".7"/></svg>
<svg style="left:3.45px;top:574.95px;" width="17.1" height="17.1" viewBox="0 0 16 16"><path d="M2 13 L14 3" stroke="#2b84b6" stroke-width="2.4"/><path d="M2 13 L14 3" stroke="#c8e6f6" stroke-width=".8" stroke-dasharray="2 1.5"/></svg>
<svg style="left:3.45px;top:595.25px;" width="17.1" height="17.1" viewBox="0 0 16 16"><path d="M8 9 V2.5 M8 9 L2.5 12.5 M8 9 L13.5 11" stroke="#e8e8e8" stroke-width="1.3" fill="none"/><path d="M8 1 L6.3 4 h3.4z M1.3 13.3 L4.5 12.8 L3 10.5z M15 11.5 L12 9.5 L11.7 12.3z" fill="#e8e8e8"/></svg>
<svg style="left:3.45px;top:614.45px;" width="17.1" height="17.1" viewBox="0 0 16 16"><circle cx="8" cy="8" r="2.4" fill="#9fd6f0" stroke="#1a6f9c" stroke-width="1.3"/></svg>
<svg style="left:3.45px;top:633.95px;" width="17.1" height="17.1" viewBox="0 0 16 16"><path d="M8 1 L15 8 L8 15 L1 8Z" fill="#f2f2f2"/><circle cx="8" cy="8" r="3.8" fill="#fff" stroke="#222" stroke-width=".8"/><path d="M8 8 V4.2 A3.8 3.8 0 0 1 11.8 8Z M8 8 V11.8 A3.8 3.8 0 0 1 4.2 8Z" fill="#222"/></svg>
<svg style="left:3.45px;top:653.75px;" width="17.1" height="17.1" viewBox="0 0 16 16"><path d="M1.5 6 L5 4.5 L8.5 6 V11.5 L5 13 L1.5 11.5Z" fill="#3094c7"/><path d="M1.5 6 L5 7.5 L8.5 6 M5 7.5V13" stroke="#8fd0ee" stroke-width=".6" fill="none"/><path d="M10.5 3.5 a2 2 0 0 1 4 0 V11 a2 2 0 0 1 -4 0 V6" stroke="#d0d0d0" stroke-width="1.3" fill="none"/></svg>
<svg style="left:40.95px;top:116.95px;" width="17.1" height="17.1" viewBox="0 0 16 16"><path d="M7 3 L10.5 1.2 L15 2.5 L15 12.5 L11.5 14 L7 12.5Z" fill="#ececec"/><path d="M11 4.2 L14 3.3 V11.5 L11 12.7Z" fill="#b9b9b9"/><path d="M7 3 L10.5 1.2 L15 2.5 L11.5 4Z" fill="#fafafa"/><path d="M1 6.8 L4.8 4.6 L10 6 L10 12.3 L6 14.8 L1 13Z" fill="#3094c7"/><path d="M1 6.8 L6 8.3 L10 6 L4.8 4.6Z" fill="#8fd0ee"/><path d="M6 8.3V14.8" stroke="#1a6f9c" stroke-width=".7"/><path d="M2.2 8.5 L4.8 9.3 V12.8 L2.2 12Z" fill="none" stroke="#8fd0ee" stroke-width=".6"/></svg>
<svg style="left:63.25px;top:124.1px;" width="4.5" height="2.8" viewBox="0 0 4.5 2.8"><path d="M0 0 H4.5 L2.25 2.8Z" fill="#e8e8e8"/></svg>
<svg style="left:40.95px;top:136.95px;" width="17.1" height="17.1" viewBox="0 0 16 16"><path d="M3 3.5 L11 2 L13.5 3 L13.5 12 L5.5 14 L3 12.5Z" fill="#ececec"/><path d="M5.5 5 L13.5 3 V12 L5.5 14Z" fill="#cfcfcf"/><path d="M6.8 6 L12 4.8 V10.8 L6.8 12Z" fill="#1a6f9c"/><path d="M9 7 l2.2 -.4 v3.6 l-2.2 .4z" fill="#3094c7"/></svg>
<svg style="left:63.25px;top:144.1px;" width="4.5" height="2.8" viewBox="0 0 4.5 2.8"><path d="M0 0 H4.5 L2.25 2.8Z" fill="#e8e8e8"/></svg>
<div style="left:41px;top:159px;width:31px;height:1px;background:#6a6a6a;"></div>
<svg style="left:40.95px;top:162.95px;" width="17.1" height="17.1" viewBox="0 0 16 16"><path d="M1.5 5.5 L7 2 L14.5 4 V11 L8 15 L1.5 12Z" fill="#f4f4f4"/><path d="M8 9 L14.5 6 V11 L8 15Z" fill="#d4d4d4"/><path d="M7 2 L14.5 4 Q14.8 7.5 8 9 L4.5 7.2 Q8 5.5 7 2Z" fill="#3094c7"/><path d="M7.5 3 L13.8 4.6" stroke="#8fd0ee" stroke-width="1"/><path d="M8 9V15" stroke="#b5b5b5" stroke-width=".6"/></svg>
<svg style="left:63.25px;top:170.1px;" width="4.5" height="2.8" viewBox="0 0 4.5 2.8"><path d="M0 0 H4.5 L2.25 2.8Z" fill="#e8e8e8"/></svg>
<svg style="left:40.95px;top:182.45px;" width="17.1" height="17.1" viewBox="0 0 16 16"><path d="M2 10.5 L10 2.5 L13.5 3.5 V12 L6 14 L2 12.5Z" fill="#ececec"/><path d="M3.5 11 L10.5 4 L10.5 10 L5 12Z" fill="#3094c7"/><path d="M4 11 L10 5" stroke="#8fd0ee" stroke-width="1"/></svg>
<svg style="left:40.95px;top:202.45px;" width="17.1" height="17.1" viewBox="0 0 16 16"><path d="M2 4 L8 2 L14 4.5 V12 L8 14.5 L2 12Z" fill="#f0f0f0"/><path d="M5 5 L13 5.5 V11.5 L8 13.5 L5 11Z" fill="#3094c7"/><path d="M8 7 L13 5.5 M8 7 V13.5 M8 7 L5 5" stroke="#1a6f9c" stroke-width=".7"/></svg>
<svg style="left:40.95px;top:222.95px;" width="17.1" height="17.1" viewBox="0 0 16 16"><path d="M2 5 L8 2.5 L14 6 V13 L6 13.5 L2 11Z" fill="#1a6f9c"/><path d="M2 5 L8 2.5 L14 6 L7 7.5Z" fill="#3094c7"/><path d="M10.5 9.5 h3.5 v3.5 h-3.5z" fill="#f4f4f4"/></svg>
<svg style="left:40.95px;top:242.45px;" width="17.1" height="17.1" viewBox="0 0 16 16"><path d="M2 5.5 L7 3 L12 5 L12 12 L7 14.5 L2 12Z" fill="#f0f0f0"/><path d="M7 7.5 L12 5 V12 L7 14.5Z" fill="#d4d4d4"/><circle cx="9.6" cy="9.6" r="2.4" fill="#3094c7"/><circle cx="9.6" cy="9.6" r="1.1" fill="#fff"/><path d="M10 3 L14.5 7.5" stroke="#222" stroke-width="2.4"/><path d="M4 2.5 l2-.8 M6.5 1.5 l2 .3 M12 2 l1.5 .8" stroke="#e8956a" stroke-width="1.2"/></svg>
<svg style="left:63.25px;top:249.6px;" width="4.5" height="2.8" viewBox="0 0 4.5 2.8"><path d="M0 0 H4.5 L2.25 2.8Z" fill="#e8e8e8"/></svg>
<div style="left:41px;top:263.5px;width:31px;height:1px;background:#6a6a6a;"></div>
<svg style="left:40.95px;top:268.25px;" width="17.1" height="17.1" viewBox="0 0 16 16"><path d="M2 1.5 h1.3 v.7 l4.6 2.1 l-4.6 2.1 v.7 h-1.3z" fill="#3094c7"/><path d="M9.3 1.5 h1.3 v.7 l4.6 2.1 l-4.6 2.1 v.7 h-1.3z" fill="#f2f2f2"/><path d="M2 8.8 h1.3 v.7 l4.6 2.1 l-4.6 2.1 v.7 h-1.3z" fill="#f2f2f2"/><path d="M9.3 8.8 h1.3 v.7 l4.6 2.1 l-4.6 2.1 v.7 h-1.3z" fill="#f2f2f2"/></svg>
<svg style="left:63.25px;top:275.4px;" width="4.5" height="2.8" viewBox="0 0 4.5 2.8"><path d="M0 0 H4.5 L2.25 2.8Z" fill="#e8e8e8"/></svg>
<div style="left:41px;top:289px;width:31px;height:1px;background:#6a6a6a;"></div>
<svg style="left:40.95px;top:293.95px;" width="17.1" height="17.1" viewBox="0 0 16 16"><path d="M5.5 4 L9 5.5 L12.5 3.5 V12 L9 14 L5.5 12.5Z" fill="#3094c7"/><path d="M9 5.5V14" stroke="#e8f4fa" stroke-width=".9"/><path d="M7.2 5v8M10.8 5v8" stroke="#1a6f9c" stroke-width=".7" stroke-dasharray="1.2 1"/><circle cx="3.2" cy="3.2" r="1.5" fill="none" stroke="#8fd0ee" stroke-width="1"/></svg>
<svg style="left:63.25px;top:301.1px;" width="4.5" height="2.8" viewBox="0 0 4.5 2.8"><path d="M0 0 H4.5 L2.25 2.8Z" fill="#e8e8e8"/></svg>
<svg style="left:40.95px;top:313.45px;" width="17.1" height="17.1" viewBox="0 0 16 16"><path d="M2.2 3 C4 1.2 6.3 2.3 5.6 4.8 C4.8 7.5 3.6 9.2 4.6 11.5 C5.6 13.8 9.8 14 11.2 11.5 C12.4 9.2 10.2 7.2 10.4 4.8 C10.6 2.2 12.6 1.4 14 3" stroke="#4f7f99" stroke-width="3.3" fill="none" stroke-linecap="round"/><path d="M2.2 3 C4 1.2 6.3 2.3 5.6 4.8 C4.8 7.5 3.6 9.2 4.6 11.5 C5.6 13.8 9.8 14 11.2 11.5 C12.4 9.2 10.2 7.2 10.4 4.8 C10.6 2.2 12.6 1.4 14 3" stroke="#8ec0d8" stroke-width="1.9" fill="none" stroke-linecap="round"/></svg>
<svg style="left:63.25px;top:320.6px;" width="4.5" height="2.8" viewBox="0 0 4.5 2.8"><path d="M0 0 H4.5 L2.25 2.8Z" fill="#e8e8e8"/></svg>
<div style="left:41px;top:335.5px;width:31px;height:1px;background:#6a6a6a;"></div>
<div style="left:40px;top:339px;width:20.5px;height:19.5px;background:#262626;border:1px solid #1a1a1a;box-sizing:border-box;"></div>
<svg style="left:41.25px;top:340.25px;" width="17.1" height="17.1" viewBox="0 0 16 16"><path d="M4.5 1.5 L14.5 6 L14 9.8 L4 5.3Z" fill="#e9c62c" stroke="#5c4d08" stroke-width=".6"/><path d="M6.3 3.2v1.8M8.3 4.1v1.8M10.3 5v1.8M12.3 5.9v1.8" stroke="#4a3d00" stroke-width=".7"/><path d="M2.2 6.5 L10.5 10.5 L11.2 9.3 L14.5 14 L8.5 14.3 L9.3 13 L1.5 9Z" fill="#3b93c6" stroke="#1d5d85" stroke-width=".5"/></svg>
<svg style="left:42.09px;top:361.59px;" width="14.82" height="14.82" viewBox="0 0 16 16"><path d="M11.5 3.5 C9 2 5.5 2.5 5.5 5 C5.5 7.5 10.5 7.5 10.5 10.5 C10.5 13.5 6.5 14 4 12.5 L4.5 11 L7 11.5 L5 9 C3.5 7 3.5 3 7 2.5 C9 2 11 2.5 12 3Z" fill="#f2f2f2" stroke="#f2f2f2" stroke-width="1.2"/></svg>
<div style="left:38px;top:384px;width:35px;height:1.2px;background:#6f6f6f;"></div>
<div style="left:73px;top:108px;width:219.5px;height:1px;background:#8c8c8c;"></div>
<div style="left:73px;top:119.6px;width:219.5px;height:1px;background:#8c8c8c;"></div>
<div style="left:179.5px;top:112px;width:4px;height:4px;background:#d0d0d0;border-radius:50%;"></div>
<div style="left:104px;top:123.7px;width:29px;height:19.3px;background:#303030;border:1px solid #5c5c5c;border-bottom:none;box-sizing:border-box;"></div>
<div style="left:134px;top:123.7px;width:30px;height:19.3px;background:#303030;border:1px solid #5c5c5c;border-bottom:none;box-sizing:border-box;"></div>
<div style="left:165px;top:123.7px;width:29.3px;height:19.3px;background:#303030;border:1px solid #5c5c5c;border-bottom:none;box-sizing:border-box;"></div>
<div style="left:195px;top:123.7px;width:30.5px;height:19.3px;background:#303030;border:1px solid #5c5c5c;border-bottom:none;box-sizing:border-box;"></div>
<div style="left:103.5px;top:124px;width:1px;height:19px;background:#5c5c5c;"></div>
<svg style="left:80.534px;top:125.334px;" width="15.732" height="15.732" viewBox="0 0 16 16"><path d="M1.5 6 L5.5 2.2 Q7 1.2 8.5 2.3 L10 3.5 L10 5.3 L11.5 4.3 Q13 3.6 14 5 L15 6.5 L15 10.5 L10.5 14.8 L1.5 9.8Z" fill="#f5d21f" stroke="#8a7410" stroke-width="1.3" stroke-linejoin="round"/><path d="M2 6.5 L10.3 11 L14.7 6.8 M10.3 11V14.3 M6 5.2 L9.8 7.2" stroke="#b49a12" stroke-width=".8" fill="none"/></svg>
<svg style="left:112px;top:126.5px;" width="13" height="12" viewBox="0 0 13 12"><rect x=".5" y=".5" width="12" height="11" fill="#f2f2f2"/><rect x=".5" y=".5" width="12" height="2" fill="#2f8fc6"/><path d="M4 4.5h7.5M4 7h7.5M4 9.5h7.5" stroke="#555" stroke-width="1.2"/><path d="M1.5 4.5h1.6M1.5 7h1.6M1.5 9.5h1.6" stroke="#2f8fc6" stroke-width="1.2"/></svg>
<svg style="left:143px;top:126px;" width="12" height="14" viewBox="0 0 12 14"><path d="M3 1 V12 M3 4.5 H8 M3 10.5 H8" stroke="#e0e0e0" stroke-width="1.2" fill="none"/><rect x="1" y="0" width="4" height="3" fill="#efefef"/><rect x="7" y="3" width="4" height="3.4" fill="#efefef"/><rect x="7" y="9" width="4" height="3.4" fill="#efefef"/></svg>
<svg style="left:172.5px;top:125.5px;" width="15" height="15" viewBox="0 0 15 15"><circle cx="7.5" cy="7.5" r="4" fill="none" stroke="#d8d8d8" stroke-width="1.2"/><path d="M7.5 .5 V14.5 M.5 7.5 H14.5" stroke="#d8d8d8" stroke-width="1.1"/><path d="M7.5 1 L14 7.5 L7.5 14 L1 7.5Z" fill="none" stroke="#bdbdbd" stroke-width=".8"/></svg>
<svg style="left:203px;top:125.5px;" width="15" height="15" viewBox="0 0 15 15"><circle cx="7.5" cy="7.5" r="6.5" fill="#e23b2e"/><path d="M7.5 7.5 L1 7.5 A6.5 6.5 0 0 1 6 1.2Z" fill="#3c8de0"/><path d="M7.5 7.5 L1 7.5 A6.5 6.5 0 0 0 6.5 13.9Z" fill="#36b04a"/><path d="M7.5 7.5 L6.5 13.9 A6.5 6.5 0 0 0 13.5 10Z" fill="#f2c81e"/><path d="M7.5 1.5 L13.5 8" stroke="#111" stroke-width="2.2"/><circle cx="5.5" cy="4.5" r="1.8" fill="#fff" opacity=".75"/></svg>
<svg style="left:283px;top:128.5px;" width="6" height="9" viewBox="0 0 6 9"><path d="M1 .8 L5 4.5 L1 8.2" stroke="#8f8f8f" stroke-width="1.3" fill="none"/></svg>
<div style="left:75.5px;top:143.3px;width:215.5px;height:19.5px;border:1px solid #b4b4b4;box-sizing:border-box;"></div>
<svg style="left:78.5px;top:148px;" width="12" height="12" viewBox="0 0 12 12"><path d="M.5 1 H11.5 L7 6.2 V11 L5 11.5 V6.2Z" fill="#f2f2f2"/><rect x=".5" y=".3" width="11" height="1.6" fill="#3a9bd6"/></svg>
<svg style="left:74.034px;top:163.434px;" width="15.732" height="15.732" viewBox="0 0 16 16"><path d="M1.5 6 L5.5 2.2 Q7 1.2 8.5 2.3 L10 3.5 L10 5.3 L11.5 4.3 Q13 3.6 14 5 L15 6.5 L15 10.5 L10.5 14.8 L1.5 9.8Z" fill="#f5d21f" stroke="#8a7410" stroke-width="1.3" stroke-linejoin="round"/><path d="M2 6.5 L10.3 11 L14.7 6.8 M10.3 11V14.3 M6 5.2 L9.8 7.2" stroke="#b49a12" stroke-width=".8" fill="none"/></svg>
<span class="t" style="left:92.00px;top:167.24px;font-size:8.6px;line-height:10.32px;color:#e6e6e6;letter-spacing:0.230px;">wrench holder  (Default&lt;&lt;Default&gt;_Display State</span>
<svg style="left:79.2px;top:185.1px;" width="3.6" height="6.4" viewBox="0 0 3.6 6.4"><path d="M0 0 L3.6 3.2 L0 6.4Z" fill="#e0e0e0"/></svg>
<svg style="left:91.776px;top:180.576px;" width="15.048" height="15.048" viewBox="0 0 16 16"><path d="M2 3 h5 l1 1.2 h6 V13 H2Z" fill="#f4f4f4" stroke="#9a9a9a" stroke-width=".6"/><circle cx="8.5" cy="8.8" r="3" fill="#3094c7"/><path d="M8.5 7v2l1.5 .8" stroke="#fff" stroke-width=".8" fill="none"/></svg>
<span class="t" style="left:110.00px;top:183.74px;font-size:8.6px;line-height:10.32px;color:#e6e6e6;letter-spacing:0.320px;">History</span>
<svg style="left:91.776px;top:197.356px;" width="15.048" height="15.048" viewBox="0 0 16 16"><path d="M2 3 h5 l1 1.2 h6 V13 H2Z" fill="#f4f4f4" stroke="#9a9a9a" stroke-width=".6"/><circle cx="8.5" cy="8.8" r="3" fill="#fff" stroke="#444" stroke-width=".8"/><path d="M8.5 8.8 L10.3 6.8" stroke="#d03020" stroke-width="1.2"/></svg>
<span class="t" style="left:110.00px;top:200.52px;font-size:8.6px;line-height:10.32px;color:#e6e6e6;letter-spacing:-0.221px;">Sensors</span>
<svg style="left:79.2px;top:218.66px;" width="3.6" height="6.4" viewBox="0 0 3.6 6.4"><path d="M0 0 L3.6 3.2 L0 6.4Z" fill="#e0e0e0"/></svg>
<svg style="left:91.776px;top:214.136px;" width="15.048" height="15.048" viewBox="0 0 16 16"><path d="M2 3 h5 l1 1.2 h6 V13 H2Z" fill="#f4f4f4" stroke="#9a9a9a" stroke-width=".6"/><path d="M5.5 12.2 L8.3 5 L11.2 12.2 M6.6 9.8 h3.5" stroke="#1d6fa8" stroke-width="1.3" fill="none"/></svg>
<span class="t" style="left:110.00px;top:217.30px;font-size:8.6px;line-height:10.32px;color:#e6e6e6;letter-spacing:0.371px;">Annotations</span>
<svg style="left:91.776px;top:230.916px;" width="15.048" height="15.048" viewBox="0 0 16 16"><path d="M2 3 h5 l1 1.2 h6 V13 H2Z" fill="#f4f4f4" stroke="#9a9a9a" stroke-width=".6"/><path d="M11 6 H6 L8.8 8.8 L6 11.8 H11" stroke="#222" stroke-width="1.2" fill="none"/></svg>
<span class="t" style="left:110.00px;top:234.08px;font-size:8.6px;line-height:10.32px;color:#e6e6e6;letter-spacing:0.139px;">Equations</span>
<svg style="left:91.776px;top:247.696px;" width="15.048" height="15.048" viewBox="0 0 16 16"><path d="M4.5 3h9M4.5 6.5h9M4.5 10h5" stroke="#e2e2e2" stroke-width="1.7"/><rect x="1.5" y="2" width="2" height="2" fill="#3094c7"/><rect x="1.5" y="5.5" width="2" height="2" fill="#3094c7"/><rect x="1.5" y="9" width="2" height="2" fill="#e8b820"/><circle cx="11.5" cy="11.5" r="2.6" fill="#e9e9e9" stroke="#333" stroke-width=".9"/><circle cx="11.5" cy="11.5" r=".9" fill="#333"/></svg>
<span class="t" style="left:110.00px;top:250.86px;font-size:8.6px;line-height:10.32px;color:#e6e6e6;letter-spacing:0.258px;">Material &lt;not specified&gt;</span>
<svg style="left:91.776px;top:264.476px;" width="15.048" height="15.048" viewBox="0 0 16 16"><path d="M3.5 3.5 L8 5 L12.5 3 V12 L8 14 L3.5 12.5Z" fill="#9b9b9b"/><path d="M8 2V15" stroke="#d8d8d8" stroke-width="1.1"/><path d="M5.7 4.5v8.5M10.3 4.5v8.5" stroke="#6c6c6c" stroke-width=".8"/></svg>
<span class="t" style="left:110.00px;top:267.64px;font-size:8.6px;line-height:10.32px;color:#e6e6e6;letter-spacing:0.095px;">Front Plane</span>
<svg style="left:91.776px;top:281.256px;" width="15.048" height="15.048" viewBox="0 0 16 16"><path d="M3.5 3.5 L8 5 L12.5 3 V12 L8 14 L3.5 12.5Z" fill="#9b9b9b"/><path d="M8 2V15" stroke="#d8d8d8" stroke-width="1.1"/><path d="M5.7 4.5v8.5M10.3 4.5v8.5" stroke="#6c6c6c" stroke-width=".8"/></svg>
<span class="t" style="left:110.00px;top:284.42px;font-size:8.6px;line-height:10.32px;color:#e6e6e6;letter-spacing:0.139px;">Top Plane</span>
<svg style="left:91.776px;top:298.036px;" width="15.048" height="15.048" viewBox="0 0 16 16"><path d="M3.5 3.5 L8 5 L12.5 3 V12 L8 14 L3.5 12.5Z" fill="#9b9b9b"/><path d="M8 2V15" stroke="#d8d8d8" stroke-width="1.1"/><path d="M5.7 4.5v8.5M10.3 4.5v8.5" stroke="#6c6c6c" stroke-width=".8"/></svg>
<span class="t" style="left:110.00px;top:301.20px;font-size:8.6px;line-height:10.32px;color:#e6e6e6;letter-spacing:0.094px;">Right Plane</span>
<svg style="left:91.776px;top:314.816px;" width="15.048" height="15.048" viewBox="0 0 16 16"><path d="M4 2 V12.5 H14" stroke="#e6e6e6" stroke-width="1.3" fill="none"/><path d="M4 .8 L2.2 3.8 h3.6z M15.3 12.5 L12.3 10.7 v3.6z" fill="#e6e6e6"/></svg>
<span class="t" style="left:110.00px;top:317.98px;font-size:8.6px;line-height:10.32px;color:#e6e6e6;letter-spacing:0.343px;">Origin</span>
<svg style="left:79.2px;top:336.12px;" width="3.6" height="6.4" viewBox="0 0 3.6 6.4"><path d="M0 0 L3.6 3.2 L0 6.4Z" fill="#e0e0e0"/></svg>
<svg style="left:91.776px;top:331.596px;" width="15.048" height="15.048" viewBox="0 0 16 16"><path d="M7 3 L10.5 1.2 L15 2.5 L15 12.5 L11.5 14 L7 12.5Z" fill="#ececec"/><path d="M11 4.2 L14 3.3 V11.5 L11 12.7Z" fill="#b9b9b9"/><path d="M7 3 L10.5 1.2 L15 2.5 L11.5 4Z" fill="#fafafa"/><path d="M1 6.8 L4.8 4.6 L10 6 L10 12.3 L6 14.8 L1 13Z" fill="#3094c7"/><path d="M1 6.8 L6 8.3 L10 6 L4.8 4.6Z" fill="#8fd0ee"/><path d="M6 8.3V14.8" stroke="#1a6f9c" stroke-width=".7"/><path d="M2.2 8.5 L4.8 9.3 V12.8 L2.2 12Z" fill="none" stroke="#8fd0ee" stroke-width=".6"/></svg>
<span class="t" style="left:110.00px;top:334.76px;font-size:8.6px;line-height:10.32px;color:#e6e6e6;letter-spacing:0.007px;">Boss-Extrude1</span>
<svg style="left:79.2px;top:352.9px;" width="3.6" height="6.4" viewBox="0 0 3.6 6.4"><path d="M0 0 L3.6 3.2 L0 6.4Z" fill="#e0e0e0"/></svg>
<svg style="left:91.776px;top:348.376px;" width="15.048" height="15.048" viewBox="0 0 16 16"><path d="M7 3 L10.5 1.2 L15 2.5 L15 12.5 L11.5 14 L7 12.5Z" fill="#ececec"/><path d="M11 4.2 L14 3.3 V11.5 L11 12.7Z" fill="#b9b9b9"/><path d="M7 3 L10.5 1.2 L15 2.5 L11.5 4Z" fill="#fafafa"/><path d="M1 6.8 L4.8 4.6 L10 6 L10 12.3 L6 14.8 L1 13Z" fill="#3094c7"/><path d="M1 6.8 L6 8.3 L10 6 L4.8 4.6Z" fill="#8fd0ee"/><path d="M6 8.3V14.8" stroke="#1a6f9c" stroke-width=".7"/><path d="M2.2 8.5 L4.8 9.3 V12.8 L2.2 12Z" fill="none" stroke="#8fd0ee" stroke-width=".6"/></svg>
<span class="t" style="left:110.00px;top:351.54px;font-size:8.6px;line-height:10.32px;color:#e6e6e6;letter-spacing:0.046px;">Boss-Extrude2</span>
<svg style="left:91.776px;top:365.156px;" width="15.048" height="15.048" viewBox="0 0 16 16"><path d="M1.5 4.5 h1.6 v2.6 h2.6 v1.8 h-2.6 v2.6 h-1.6z" fill="#f0f0f0"/><path d="M14.5 4.5 h-1.6 v2.6 h-2.6 v1.8 h2.6 v2.6 h1.6z" fill="#f0f0f0"/><path d="M7.2 2 h1.6 v12 h-1.6z" fill="#3094c7"/></svg>
<span class="t" style="left:110.00px;top:368.32px;font-size:8.6px;line-height:10.32px;color:#e6e6e6;letter-spacing:0.252px;">Mirror1</span>
<svg style="left:79.2px;top:386.46px;" width="3.6" height="6.4" viewBox="0 0 3.6 6.4"><path d="M0 0 L3.6 3.2 L0 6.4Z" fill="#e0e0e0"/></svg>
<svg style="left:91.776px;top:381.936px;" width="15.048" height="15.048" viewBox="0 0 16 16"><path d="M3 3.5 L11 2 L13.5 3 L13.5 12 L5.5 14 L3 12.5Z" fill="#ececec"/><path d="M5.5 5 L13.5 3 V12 L5.5 14Z" fill="#cfcfcf"/><path d="M6.8 6 L12 4.8 V10.8 L6.8 12Z" fill="#1a6f9c"/><path d="M9 7 l2.2 -.4 v3.6 l-2.2 .4z" fill="#3094c7"/></svg>
<span class="t" style="left:110.00px;top:385.10px;font-size:8.6px;line-height:10.32px;color:#e6e6e6;letter-spacing:0.194px;">Cut-Extrude1</span>
<svg style="left:79.2px;top:403.24px;" width="3.6" height="6.4" viewBox="0 0 3.6 6.4"><path d="M0 0 L3.6 3.2 L0 6.4Z" fill="#e0e0e0"/></svg>
<svg style="left:91.776px;top:398.716px;" width="15.048" height="15.048" viewBox="0 0 16 16"><path d="M3 3.5 L11 2 L13.5 3 L13.5 12 L5.5 14 L3 12.5Z" fill="#ececec"/><path d="M5.5 5 L13.5 3 V12 L5.5 14Z" fill="#cfcfcf"/><path d="M6.8 6 L12 4.8 V10.8 L6.8 12Z" fill="#1a6f9c"/><path d="M9 7 l2.2 -.4 v3.6 l-2.2 .4z" fill="#3094c7"/></svg>
<span class="t" style="left:110.00px;top:401.88px;font-size:8.6px;line-height:10.32px;color:#e6e6e6;letter-spacing:0.236px;">Cut-Extrude2</span>
<svg style="left:79.2px;top:420.02px;" width="3.6" height="6.4" viewBox="0 0 3.6 6.4"><path d="M0 0 L3.6 3.2 L0 6.4Z" fill="#e0e0e0"/></svg>
<svg style="left:91.776px;top:415.496px;" width="15.048" height="15.048" viewBox="0 0 16 16"><path d="M3 3.5 L11 2 L13.5 3 L13.5 12 L5.5 14 L3 12.5Z" fill="#ececec"/><path d="M5.5 5 L13.5 3 V12 L5.5 14Z" fill="#cfcfcf"/><path d="M6.8 6 L12 4.8 V10.8 L6.8 12Z" fill="#1a6f9c"/><path d="M9 7 l2.2 -.4 v3.6 l-2.2 .4z" fill="#3094c7"/></svg>
<span class="t" style="left:110.00px;top:418.66px;font-size:8.6px;line-height:10.32px;color:#e6e6e6;letter-spacing:0.236px;">Cut-Extrude3</span>
<svg style="left:79.2px;top:436.8px;" width="3.6" height="6.4" viewBox="0 0 3.6 6.4"><path d="M0 0 L3.6 3.2 L0 6.4Z" fill="#e0e0e0"/></svg>
<svg style="left:91.776px;top:432.276px;" width="15.048" height="15.048" viewBox="0 0 16 16"><path d="M3 3.5 L11 2 L13.5 3 L13.5 12 L5.5 14 L3 12.5Z" fill="#ececec"/><path d="M5.5 5 L13.5 3 V12 L5.5 14Z" fill="#cfcfcf"/><path d="M6.8 6 L12 4.8 V10.8 L6.8 12Z" fill="#1a6f9c"/><path d="M9 7 l2.2 -.4 v3.6 l-2.2 .4z" fill="#3094c7"/></svg>
<span class="t" style="left:110.00px;top:435.44px;font-size:8.6px;line-height:10.32px;color:#e6e6e6;letter-spacing:0.236px;">Cut-Extrude4</span>
<svg style="left:91.776px;top:449.056px;" width="15.048" height="15.048" viewBox="0 0 16 16"><path d="M3.5 3.5 L8 5 L12.5 3 V12 L8 14 L3.5 12.5Z" fill="#9b9b9b"/><path d="M8 2V15" stroke="#d8d8d8" stroke-width="1.1"/><path d="M5.7 4.5v8.5M10.3 4.5v8.5" stroke="#6c6c6c" stroke-width=".8"/></svg>
<span class="t" style="left:110.00px;top:452.22px;font-size:8.6px;line-height:10.32px;color:#e6e6e6;letter-spacing:-0.130px;">Plane1</span>
<svg style="left:91.776px;top:465.836px;" width="15.048" height="15.048" viewBox="0 0 16 16"><path d="M3.5 3.5 L8 5 L12.5 3 V12 L8 14 L3.5 12.5Z" fill="#9b9b9b"/><path d="M8 2V15" stroke="#d8d8d8" stroke-width="1.1"/><path d="M5.7 4.5v8.5M10.3 4.5v8.5" stroke="#6c6c6c" stroke-width=".8"/></svg>
<span class="t" style="left:110.00px;top:469.00px;font-size:8.6px;line-height:10.32px;color:#e6e6e6;letter-spacing:-0.047px;">Plane2</span>
<svg style="left:79.2px;top:487.14px;" width="3.6" height="6.4" viewBox="0 0 3.6 6.4"><path d="M0 0 L3.6 3.2 L0 6.4Z" fill="#e0e0e0"/></svg>
<svg style="left:91.776px;top:482.616px;" width="15.048" height="15.048" viewBox="0 0 16 16"><path d="M3 3.5 L11 2 L13.5 3 L13.5 12 L5.5 14 L3 12.5Z" fill="#ececec"/><path d="M5.5 5 L13.5 3 V12 L5.5 14Z" fill="#cfcfcf"/><path d="M6.8 6 L12 4.8 V10.8 L6.8 12Z" fill="#1a6f9c"/><path d="M9 7 l2.2 -.4 v3.6 l-2.2 .4z" fill="#3094c7"/></svg>
<span class="t" style="left:110.00px;top:485.78px;font-size:8.6px;line-height:10.32px;color:#e6e6e6;letter-spacing:0.236px;">Cut-Extrude7</span>
<svg style="left:91.776px;top:499.396px;" width="15.048" height="15.048" viewBox="0 0 16 16"><path d="M1.5 5.5 L7 2 L14.5 4 V11 L8 15 L1.5 12Z" fill="#f4f4f4"/><path d="M8 9 L14.5 6 V11 L8 15Z" fill="#d4d4d4"/><path d="M7 2 L14.5 4 Q14.8 7.5 8 9 L4.5 7.2 Q8 5.5 7 2Z" fill="#3094c7"/><path d="M7.5 3 L13.8 4.6" stroke="#8fd0ee" stroke-width="1"/><path d="M8 9V15" stroke="#b5b5b5" stroke-width=".6"/></svg>
<span class="t" style="left:110.00px;top:502.56px;font-size:8.6px;line-height:10.32px;color:#e6e6e6;letter-spacing:0.008px;">Fillet1</span>
<svg style="left:91.776px;top:516.176px;" width="15.048" height="15.048" viewBox="0 0 16 16"><path d="M1.5 5.5 L7 2 L14.5 4 V11 L8 15 L1.5 12Z" fill="#f4f4f4"/><path d="M8 9 L14.5 6 V11 L8 15Z" fill="#d4d4d4"/><path d="M7 2 L14.5 4 Q14.8 7.5 8 9 L4.5 7.2 Q8 5.5 7 2Z" fill="#3094c7"/><path d="M7.5 3 L13.8 4.6" stroke="#8fd0ee" stroke-width="1"/><path d="M8 9V15" stroke="#b5b5b5" stroke-width=".6"/></svg>
<span class="t" style="left:110.00px;top:519.34px;font-size:8.6px;line-height:10.32px;color:#e6e6e6;letter-spacing:0.080px;">Fillet2</span>
<svg style="left:91.776px;top:532.956px;" width="15.048" height="15.048" viewBox="0 0 16 16"><path d="M1.5 5.5 L7 2 L14.5 4 V11 L8 15 L1.5 12Z" fill="#f4f4f4"/><path d="M8 9 L14.5 6 V11 L8 15Z" fill="#d4d4d4"/><path d="M7 2 L14.5 4 Q14.8 7.5 8 9 L4.5 7.2 Q8 5.5 7 2Z" fill="#3094c7"/><path d="M7.5 3 L13.8 4.6" stroke="#8fd0ee" stroke-width="1"/><path d="M8 9V15" stroke="#b5b5b5" stroke-width=".6"/></svg>
<span class="t" style="left:110.00px;top:536.12px;font-size:8.6px;line-height:10.32px;color:#e6e6e6;letter-spacing:0.080px;">Fillet3</span>
<svg style="left:91.776px;top:549.736px;" width="15.048" height="15.048" viewBox="0 0 16 16"><path d="M1.5 5.5 L7 2 L14.5 4 V11 L8 15 L1.5 12Z" fill="#f4f4f4"/><path d="M8 9 L14.5 6 V11 L8 15Z" fill="#d4d4d4"/><path d="M7 2 L14.5 4 Q14.8 7.5 8 9 L4.5 7.2 Q8 5.5 7 2Z" fill="#3094c7"/><path d="M7.5 3 L13.8 4.6" stroke="#8fd0ee" stroke-width="1"/><path d="M8 9V15" stroke="#b5b5b5" stroke-width=".6"/></svg>
<span class="t" style="left:110.00px;top:552.90px;font-size:8.6px;line-height:10.32px;color:#e6e6e6;letter-spacing:0.080px;">Fillet5</span>
<svg style="left:91.776px;top:566.516px;" width="15.048" height="15.048" viewBox="0 0 16 16"><path d="M1.5 5.5 L7 2 L14.5 4 V11 L8 15 L1.5 12Z" fill="#f4f4f4"/><path d="M8 9 L14.5 6 V11 L8 15Z" fill="#d4d4d4"/><path d="M7 2 L14.5 4 Q14.8 7.5 8 9 L4.5 7.2 Q8 5.5 7 2Z" fill="#3094c7"/><path d="M7.5 3 L13.8 4.6" stroke="#8fd0ee" stroke-width="1"/><path d="M8 9V15" stroke="#b5b5b5" stroke-width=".6"/></svg>
<span class="t" style="left:110.00px;top:569.68px;font-size:8.6px;line-height:10.32px;color:#e6e6e6;letter-spacing:0.034px;">Fillet10</span>
<div style="left:73px;top:581.7px;width:219.3px;height:2.9px;background:linear-gradient(180deg,#4585d8 0%,#2f6fd0 45%,#224f9c 100%);"></div>
<div style="left:73px;top:730px;width:219px;height:12.3px;background:#c9c9c9;"></div>
<div style="left:73px;top:730px;width:13px;height:12.3px;background:#f1f1f1;"></div>
<div style="left:270px;top:730px;width:10px;height:12.3px;background:#e6e6e6;"></div>
<div style="left:280px;top:730px;width:12px;height:12.3px;background:#f1f1f1;"></div>
<svg style="left:76px;top:732.5px;" width="6" height="7" viewBox="0 0 6 7"><path d="M4.5 .8 L1.3 3.5 L4.5 6.2" stroke="#333" stroke-width="1.3" fill="none"/></svg>
<svg style="left:283.5px;top:732.5px;" width="6" height="7" viewBox="0 0 6 7"><path d="M1.5 .8 L4.7 3.5 L1.5 6.2" stroke="#333" stroke-width="1.3" fill="none"/></svg>
<div style="left:293px;top:404px;width:6px;height:26px;background:#3a3a3a;"></div>
<div style="left:294.3px;top:414.5px;width:3px;height:3px;background:#e0e0e0;border-radius:50%;"></div>
<div style="left:1242.8px;top:90.3px;width:38px;height:666px;background:#4a4a4a;"></div>
<div style="left:1242.2px;top:744px;width:1px;height:12px;background:#7a7a7a;"></div>
<div style="left:1247px;top:92px;width:33px;height:2px;background-image:repeating-linear-gradient(90deg,#c8c8c8 0,#c8c8c8 1.3px,transparent 1.3px,transparent 3px);opacity:.85;"></div>
<svg style="left:1248.18px;top:99.68px;" width="18.24" height="18.24" viewBox="0 0 16 16"><path d="M13 2.5 H5 Q2.5 2.5 2.5 5 V10 Q2.5 12.5 5 12.5 H13" stroke="#3aa0d4" stroke-width="2.2" fill="none"/><path d="M13 2.5 H5 Q2.5 2.5 2.5 5 V10 Q2.5 12.5 5 12.5 H13" stroke="#bfe3f5" stroke-width=".7" fill="none"/><path d="M6 5.5 h8 M6 8 h8 M6 10.5 h8 M8 4 v8 M10.5 4 v8 M13 4 v8" stroke="#777" stroke-width=".5"/></svg>
<svg style="left:1271.45px;top:107.4px;" width="4.5" height="2.8" viewBox="0 0 4.5 2.8"><path d="M0 0 H4.5 L2.25 2.8Z" fill="#e8e8e8"/></svg>
<svg style="left:1248.18px;top:119.88px;" width="18.24" height="18.24" viewBox="0 0 16 16"><path d="M3 8 L8 3.5 L13 8 V10" stroke="#3aa0d4" stroke-width="2.7" fill="none"/><path d="M2 12.5 L8.5 6.5" stroke="#111" stroke-width="1.4"/><path d="M1.3 13.3 L2.2 10.5 L4 12.4Z M9.3 5.8 L8.3 8.5 L6.6 6.7Z" fill="#f0f0f0"/></svg>
<svg style="left:1271.45px;top:127.6px;" width="4.5" height="2.8" viewBox="0 0 4.5 2.8"><path d="M0 0 H4.5 L2.25 2.8Z" fill="#e8e8e8"/></svg>
<div style="left:1247px;top:142px;width:32px;height:1px;background:#6a6a6a;"></div>
<svg style="left:1248.18px;top:145.78px;" width="18.24" height="18.24" viewBox="0 0 16 16"><path d="M2.5 13 L13.5 3" stroke="#3aa0d4" stroke-width="2.8"/><path d="M2.5 13 L13.5 3" stroke="#a9d8ef" stroke-width=".8"/><rect x="1" y="11.8" width="2.4" height="2.4" fill="#f0f0f0"/><rect x="12.4" y="1.8" width="2.4" height="2.4" fill="#f0f0f0"/></svg>
<svg style="left:1271.45px;top:153.5px;" width="4.5" height="2.8" viewBox="0 0 4.5 2.8"><path d="M0 0 H4.5 L2.25 2.8Z" fill="#e8e8e8"/></svg>
<svg style="left:1248.18px;top:165.88px;" width="18.24" height="18.24" viewBox="0 0 16 16"><rect x="2" y="3.5" width="12" height="9.5" rx="1" fill="none" stroke="#3aa0d4" stroke-width="2.7"/><rect x="2" y="3.5" width="12" height="9.5" rx="1" fill="none" stroke="#a9d8ef" stroke-width=".8"/><rect x="6.5" y="7" width="3" height="2.4" fill="#222" stroke="#ddd" stroke-width=".5"/><rect x="12.6" y="2.2" width="2.2" height="2.2" fill="#f0f0f0"/></svg>
<svg style="left:1271.45px;top:173.6px;" width="4.5" height="2.8" viewBox="0 0 4.5 2.8"><path d="M0 0 H4.5 L2.25 2.8Z" fill="#e8e8e8"/></svg>
<svg style="left:1248.18px;top:185.58px;" width="18.24" height="18.24" viewBox="0 0 16 16"><rect x="1.5" y="4.5" width="13" height="7.5" rx="3.7" fill="none" stroke="#3aa0d4" stroke-width="2.7"/><rect x="1.5" y="4.5" width="13" height="7.5" rx="3.7" fill="none" stroke="#a9d8ef" stroke-width=".8"/><rect x="4.5" y="7.3" width="2" height="2" fill="#ddd"/><rect x="9.5" y="7.3" width="2" height="2" fill="#ddd"/></svg>
<svg style="left:1271.45px;top:193.3px;" width="4.5" height="2.8" viewBox="0 0 4.5 2.8"><path d="M0 0 H4.5 L2.25 2.8Z" fill="#e8e8e8"/></svg>
<svg style="left:1248.18px;top:205.38px;" width="18.24" height="18.24" viewBox="0 0 16 16"><circle cx="8" cy="8.5" r="5.6" fill="none" stroke="#3aa0d4" stroke-width="2.7"/><circle cx="8" cy="8.5" r="5.6" fill="none" stroke="#a9d8ef" stroke-width=".8"/><circle cx="8" cy="8.5" r="1.5" fill="#222" stroke="#ddd" stroke-width=".6"/><rect x="11.5" y="3" width="2.2" height="2.2" fill="#f0f0f0"/></svg>
<svg style="left:1271.45px;top:213.1px;" width="4.5" height="2.8" viewBox="0 0 4.5 2.8"><path d="M0 0 H4.5 L2.25 2.8Z" fill="#e8e8e8"/></svg>
<svg style="left:1248.18px;top:225.18px;" width="18.24" height="18.24" viewBox="0 0 16 16"><path d="M2 11.5 A6.2 6.2 0 0 1 14 11.5" fill="none" stroke="#3aa0d4" stroke-width="2.7"/><circle cx="8" cy="11" r="2" fill="#8a8a8a"/><rect x="1" y="10.5" width="2.2" height="2.2" fill="#f0f0f0"/><rect x="12.8" y="10.5" width="2.2" height="2.2" fill="#f0f0f0"/><rect x="6.9" y="4" width="2.2" height="2.2" fill="#f0f0f0"/></svg>
<svg style="left:1271.45px;top:232.9px;" width="4.5" height="2.8" viewBox="0 0 4.5 2.8"><path d="M0 0 H4.5 L2.25 2.8Z" fill="#e8e8e8"/></svg>
<svg style="left:1248.18px;top:244.38px;" width="18.24" height="18.24" viewBox="0 0 16 16"><path d="M2.5 13.5 C3 3 7 1 8 8 C9 15 13 13 13.5 2.5" fill="none" stroke="#3aa0d4" stroke-width="2.9"/><path d="M2.5 13.5 C3 3 7 1 8 8 C9 15 13 13 13.5 2.5" fill="none" stroke="#a9d8ef" stroke-width=".8"/></svg>
<svg style="left:1271.45px;top:252.1px;" width="4.5" height="2.8" viewBox="0 0 4.5 2.8"><path d="M0 0 H4.5 L2.25 2.8Z" fill="#e8e8e8"/></svg>
<svg style="left:1248.18px;top:264.68px;" width="18.24" height="18.24" viewBox="0 0 16 16"><ellipse cx="8" cy="8" rx="6.2" ry="4.3" transform="rotate(-30 8 8)" fill="none" stroke="#3aa0d4" stroke-width="2.7"/><ellipse cx="8" cy="8" rx="6.2" ry="4.3" transform="rotate(-30 8 8)" fill="none" stroke="#a9d8ef" stroke-width=".8"/><circle cx="8" cy="8" r="1.1" fill="#ddd"/></svg>
<svg style="left:1271.45px;top:272.4px;" width="4.5" height="2.8" viewBox="0 0 4.5 2.8"><path d="M0 0 H4.5 L2.25 2.8Z" fill="#e8e8e8"/></svg>
<svg style="left:1248.18px;top:284.08px;" width="18.24" height="18.24" viewBox="0 0 16 16"><path d="M3 3.5 H9 Q12.5 3.5 12.5 7 V13" fill="none" stroke="#6c6c6c" stroke-width="2"/><rect x="7" y="8" width="2.4" height="2.4" fill="#5f5f5f"/></svg>
<svg style="left:1271.45px;top:291.8px;" width="4.5" height="2.8" viewBox="0 0 4.5 2.8"><path d="M0 0 H4.5 L2.25 2.8Z" fill="#7c7c7c"/></svg>
<svg style="left:1248.18px;top:304.08px;" width="18.24" height="18.24" viewBox="0 0 16 16"><path d="M8 2 L13.3 5 V11 L8 14 L2.7 11 V5Z" fill="none" stroke="#3aa0d4" stroke-width="2.7"/><path d="M8 2 L13.3 5 V11 L8 14 L2.7 11 V5Z" fill="none" stroke="#a9d8ef" stroke-width=".8"/><circle cx="8" cy="8" r="1.3" fill="#555"/></svg>
<svg style="left:1248.18px;top:324.08px;" width="18.24" height="18.24" viewBox="0 0 16 16"><rect x="6" y="6" width="4" height="4" fill="#bfe3f5" stroke="#3aa0d4" stroke-width="1.2"/></svg>
<svg style="left:1248.18px;top:344.88px;" width="18.24" height="18.24" viewBox="0 0 16 16"><path d="M4 3v11M6.3 2.5v11M8.6 2.5v11M11 2v11 M3 5l9.5-1 M3 7.5l9.5-1 M3 10l9.5-1 M3 12.5l9.5-1" stroke="#f0f0f0" stroke-width=".9"/></svg>
<svg style="left:1248.18px;top:364.88px;" width="18.24" height="18.24" viewBox="0 0 16 16"><path d="M2.5 14 L8 2.5 L13.5 14 M5 9.5 H11" fill="none" stroke="#c9d3da" stroke-width="2.6"/><path d="M2.5 14 L8 2.5 L13.5 14 M5 9.5 H11" fill="none" stroke="#3d7fa3" stroke-width=".9"/></svg>
<div style="left:1247px;top:386.5px;width:32px;height:1px;background:#6a6a6a;"></div>
<svg style="left:1248.18px;top:388.88px;" width="18.24" height="18.24" viewBox="0 0 16 16"><path d="M3 3v4h3 M9 3v10 M6 13h7" stroke="#626262" stroke-width="1.6" fill="none"/></svg>
<svg style="left:1271.45px;top:396.6px;" width="4.5" height="2.8" viewBox="0 0 4.5 2.8"><path d="M0 0 H4.5 L2.25 2.8Z" fill="#7c7c7c"/></svg>
<svg style="left:1248.18px;top:408.88px;" width="18.24" height="18.24" viewBox="0 0 16 16"><path d="M2.5 5 L8 2.5 L13.5 5 V11.5 L8 14 L2.5 11.5Z" fill="#f4f4f4"/><path d="M2.5 5 L8 7.5 L13.5 5 M8 7.5V14" stroke="#9a9a9a" stroke-width=".6" fill="none"/><path d="M8 7.5 L13.5 5 V11.5 L8 14Z" fill="#d9d9d9"/><path d="M2.5 5 L8 7.5 V14 L2.5 11.5Z" fill="#3aa0d4" opacity=".35"/></svg>
<svg style="left:1271.45px;top:416.6px;" width="4.5" height="2.8" viewBox="0 0 4.5 2.8"><path d="M0 0 H4.5 L2.25 2.8Z" fill="#e8e8e8"/></svg>
<svg style="left:1248.18px;top:430.28px;" width="18.24" height="18.24" viewBox="0 0 16 16"><path d="M4 3 V11 H13 M6.5 3 V8.5 H13" stroke="#636363" stroke-width="1.7" fill="none"/></svg>
<svg style="left:1248.18px;top:449.28px;" width="18.24" height="18.24" viewBox="0 0 16 16"><path d="M3.5 3v10M6.5 3v10M9.5 3v10M12.5 3v10 M3.5 8h9" stroke="#5f5f5f" stroke-width="1.3" stroke-dasharray="2.5 1"/></svg>
<svg style="left:1248.18px;top:468.28px;" width="18.24" height="18.24" viewBox="0 0 16 16"><path d="M3 3h3v3h-3zM8 3h3v3h-3zM3 8h3v3h-3zM8 8h3v3h-3z M3 13h10" stroke="#626262" stroke-width="1.1" fill="none"/></svg>
<svg style="left:1271.45px;top:476px;" width="4.5" height="2.8" viewBox="0 0 4.5 2.8"><path d="M0 0 H4.5 L2.25 2.8Z" fill="#7c7c7c"/></svg>
<svg style="left:1248.18px;top:487.28px;" width="18.24" height="18.24" viewBox="0 0 16 16"><path d="M3 13 L8 8 M8 8 v-3 h-3" stroke="#636363" stroke-width="1.6" fill="none"/><rect x="8.5" y="3" width="5" height="5" fill="#5f5f5f"/></svg>
<svg style="left:1271.45px;top:495px;" width="4.5" height="2.8" viewBox="0 0 4.5 2.8"><path d="M0 0 H4.5 L2.25 2.8Z" fill="#7c7c7c"/></svg>
<svg style="left:1248.18px;top:508.68px;" width="18.24" height="18.24" viewBox="0 0 16 16"><path d="M6 2.5 V12 H13 M3 12h3" stroke="#636363" stroke-width="1.8" fill="none"/></svg>
<svg style="left:1271.45px;top:516.4px;" width="4.5" height="2.8" viewBox="0 0 4.5 2.8"><path d="M0 0 H4.5 L2.25 2.8Z" fill="#7c7c7c"/></svg>
<svg style="left:1248.18px;top:527.68px;" width="18.24" height="18.24" viewBox="0 0 16 16"><rect x="3" y="3" width="10" height="10" rx="1.5" fill="none" stroke="#636363" stroke-width="1.6"/><path d="M5.5 10.5 L10.5 5.5 M8 5.5h2.5V8" stroke="#636363" stroke-width="1.3" fill="none"/></svg>
<svg style="left:1248.18px;top:548.08px;" width="18.24" height="18.24" viewBox="0 0 16 16"><circle cx="8" cy="8" r="5.3" fill="none" stroke="#636363" stroke-width="1.6"/><circle cx="8" cy="8" r="2.2" fill="none" stroke="#636363" stroke-width="1.3"/></svg>
<svg style="left:1271.45px;top:555.8px;" width="4.5" height="2.8" viewBox="0 0 4.5 2.8"><path d="M0 0 H4.5 L2.25 2.8Z" fill="#7c7c7c"/></svg>
<svg style="left:1248.18px;top:567.08px;" width="18.24" height="18.24" viewBox="0 0 16 16"><path d="M2.5 3 V13.5 H13.5" stroke="#3aa0d4" stroke-width="2.7" fill="none"/><path d="M5 11.5 L11 5" stroke="#e08a2a" stroke-width="2.8"/><path d="M11 5 L13.5 2.5" stroke="#f2c81e" stroke-width="2.8"/><path d="M5 5h3" stroke="#ddd" stroke-width="1"/></svg>
<svg style="left:1248.18px;top:588.48px;" width="18.24" height="18.24" viewBox="0 0 16 16"><path d="M2.5 3 V13.5 H13.5" stroke="#3aa0d4" stroke-width="2.7" fill="none"/><path d="M5 6 L13 11 L13 8 L5 3.5Z" fill="#e8c32a"/><path d="M7 5.8v1.5M9 7v1.5M11 8.2v1.5" stroke="#6a5500" stroke-width=".6"/></svg>
<div style="left:1243px;top:612.8px;width:37px;height:1px;background:#6c6c6c;"></div>
<div style="left:1224px;top:129px;width:19.5px;height:17px;background:#2b2b2b;border:1px solid #3c3c3c;box-sizing:border-box;"></div>
<div style="left:1224px;top:146.6px;width:19.5px;height:18.4px;background:#b9b9b9;border:1px solid #d4d4d4;box-sizing:border-box;"></div>
<div style="left:1224px;top:166px;width:19.5px;height:17.5px;background:#2b2b2b;border:1px solid #3c3c3c;box-sizing:border-box;"></div>
<div style="left:1224px;top:184.6px;width:19.5px;height:16.9px;background:#2b2b2b;border:1px solid #3c3c3c;box-sizing:border-box;"></div>
<div style="left:1224px;top:203px;width:19.5px;height:17px;background:#2b2b2b;border:1px solid #3c3c3c;box-sizing:border-box;"></div>
<div style="left:1224px;top:221.5px;width:19.5px;height:17px;background:#2b2b2b;border:1px solid #3c3c3c;box-sizing:border-box;"></div>
<div style="left:1224px;top:240px;width:19.5px;height:17px;background:#2b2b2b;border:1px solid #3c3c3c;box-sizing:border-box;"></div>
<svg style="left:1226.8px;top:130.5px;" width="14" height="14" viewBox="0 0 14 14"><path d="M7 1.2 L13 7 H11.3 V12.8 H2.7 V7 H1Z" fill="#f4f4f4"/><path d="M7 .8 L13.3 6.8" stroke="#3aa0d4" stroke-width="1.5" fill="none"/><path d="M7 .8 L.7 6.8" stroke="#3aa0d4" stroke-width="1.5" fill="none"/><rect x="5.6" y="8.3" width="2.8" height="4.5" fill="#2b2b2b"/></svg>
<svg style="left:1226.8px;top:148.5px;" width="14" height="15" viewBox="0 0 14 15"><path d="M2 4 L5 2.5 L5 12 L2 13.5Z M5.8 3 L8.8 1.5 V11.5 L5.8 13Z M9.6 3.5 L12.4 2.3 V11.5 L9.6 13Z" fill="#f6f6f6" stroke="#333" stroke-width=".9"/></svg>
<svg style="left:1225.8px;top:168px;" width="16" height="14" viewBox="0 0 16 14"><path d="M1 2 H6 L7.2 3.5 H13 V12.5 H1Z" fill="#e9e9e9"/><path d="M3.5 6 H15.2 L13 12.5 H1Z" fill="#fbfbfb" stroke="#999" stroke-width=".4"/></svg>
<svg style="left:1226.3px;top:186px;" width="15" height="14" viewBox="0 0 15 14"><rect x=".5" y=".5" width="14" height="13" rx="1.5" fill="#595959" stroke="#777" stroke-width=".6"/><rect x="2.3" y="2.2" width="7.5" height="2.6" fill="#f0d23a" stroke="#3a3000" stroke-width=".5"/><path d="M4.7 4.8v2.7h-2.2v3.8h7v-3.8h-2.2v-2.7z" fill="#f0d23a" stroke="#3a3000" stroke-width=".5"/><rect x="11" y="2.2" width="2" height="2" fill="#f0d23a"/><rect x="11.2" y="5.5" width="1.8" height="6" fill="#f2f2f2" stroke="#333" stroke-width=".4"/></svg>
<svg style="left:1226.8px;top:204.5px;" width="14" height="14" viewBox="0 0 14 14"><circle cx="7" cy="7" r="6.3" fill="#e23b2e"/><path d="M7 7 L.7 7 A6.3 6.3 0 0 1 7 .7Z" fill="#3c8de0"/><path d="M7 7 L.7 7 A6.3 6.3 0 0 0 7 13.3Z" fill="#36b04a"/><path d="M7 7 L7 13.3 A6.3 6.3 0 0 0 12.5 10Z" fill="#f2c81e"/><circle cx="5" cy="4.5" r="2" fill="#fff" opacity=".7"/></svg>
<svg style="left:1227.3px;top:223.3px;" width="13" height="13.5" viewBox="0 0 13 13.5"><rect x=".5" y=".5" width="12" height="12.5" fill="#f4f4f4"/><rect x=".5" y=".5" width="12" height="2.2" fill="#2f8fc6"/><path d="M4.5 5h7M4.5 8h7M4.5 11h7" stroke="#444" stroke-width="1.3"/><path d="M1.7 5h1.7M1.7 8h1.7M1.7 11h1.7" stroke="#2f8fc6" stroke-width="1.3"/></svg>
<svg style="left:1226.3px;top:242.5px;" width="15" height="12" viewBox="0 0 15 12"><path d="M.5 .5 H8.5 V6.5 H4 L2 8.5 V6.5 H.5Z" fill="#3aa0d4"/><path d="M6 4 H14.5 V10 H13 V11.8 L11 10 H6Z" fill="#f4f4f4"/></svg>
<div style="left:293.3px;top:743.8px;width:949.3px;height:12px;background:#454545;"></div>
<div style="left:73px;top:744.3px;width:21.5px;height:11px;background:#a8a8a8;"></div>
<div style="left:94.5px;top:744.3px;width:48.8px;height:11px;background:#8f8f8f;"></div>
<div style="left:95px;top:744.8px;width:11.3px;height:10.2px;border:1px solid #a2a2a2;box-sizing:border-box;"></div>
<div style="left:107px;top:744.8px;width:11.3px;height:10.2px;border:1px solid #a2a2a2;box-sizing:border-box;"></div>
<div style="left:119px;top:744.8px;width:11.3px;height:10.2px;border:1px solid #a2a2a2;box-sizing:border-box;"></div>
<div style="left:131px;top:744.8px;width:11.3px;height:10.2px;border:1px solid #a2a2a2;box-sizing:border-box;"></div>
<svg style="left:95px;top:744.8px;" width="48" height="10.2" viewBox="0 0 48 10.2"><g fill="#a8a8a8"><path d="M8 2.3 L4.3 5.1 L8 7.9Z"/><rect x="3" y="2.3" width="1.2" height="5.6"/><path d="M19.5 2.3 L15.8 5.1 L19.5 7.9Z"/><path d="M28.5 2.3 L32.2 5.1 L28.5 7.9Z"/><path d="M40 2.3 L43.7 5.1 L40 7.9Z"/><rect x="43.9" y="2.3" width="1.2" height="5.6"/></g></svg>
<span class="t" style="left:153.00px;top:744.72px;font-size:8.8px;line-height:10.56px;color:#f6f6f6;letter-spacing:0.216px;font-weight:bold;">Model</span>
<div style="left:187px;top:744.3px;width:56px;height:11.2px;background:#2c2c2c;border:1px solid #5c5c5c;border-bottom:none;box-sizing:border-box;"></div>
<span class="t" style="left:194.50px;top:744.72px;font-size:8.8px;line-height:10.56px;color:#e6e6e6;letter-spacing:-0.189px;">3D Views</span>
<div style="left:243px;top:744.5px;width:50.3px;height:1px;background:#6c6c6c;"></div>
<div style="left:0px;top:755.4px;width:1280px;height:1px;background:#7e7e7e;"></div>
<div style="left:1242.2px;top:744px;width:1px;height:12px;background:#8a8a8a;"></div>
<span class="t" style="left:1.00px;top:757.72px;font-size:9.3px;line-height:11.16px;color:#efefef;letter-spacing:-0.392px;">SOLIDWORKS Premium 2017 x64 Edition</span>
<div style="left:1072.5px;top:757px;width:1px;height:12px;background:#a8a8a8;"></div>
<div style="left:1078.7px;top:757px;width:1px;height:12px;background:#a8a8a8;"></div>
<div style="left:1132.5px;top:757px;width:1px;height:12px;background:#a8a8a8;"></div>
<div style="left:1144.5px;top:757px;width:1px;height:12px;background:#a8a8a8;"></div>
<span class="t" style="left:1081.50px;top:758.08px;font-size:8.7px;line-height:10.44px;color:#e6e6e6;letter-spacing:0.085px;">Editing Part</span>
<span class="t" style="left:1176.50px;top:758.08px;font-size:8.7px;line-height:10.44px;color:#e6e6e6;letter-spacing:-0.674px;">IPS</span>
<svg style="left:1210.3px;top:761.7px;" width="4.5" height="2.8" viewBox="0 0 4.5 2.8"><path d="M0 2.8 H4.5 L2.25 0Z" fill="#f0f0f0"/></svg>
<svg style="left:1266px;top:757px;" width="12" height="11" viewBox="0 0 12 11"><path d="M1 5 L6 2 L11 5.5 L6 8.5Z" fill="#f0f0f0"/><path d="M1 7 L6 10.5 L11 7.5" stroke="#f0f0f0" stroke-width="1" fill="none"/><path d="M3.5 4.5 L8 7.5" stroke="#444" stroke-width=".8"/></svg>
<div style="left:0px;top:769.7px;width:1280px;height:30.3px;background:linear-gradient(90deg,#474747 0px,#474747 735px,#3d4449 755px,#2c3d49 775px,#1f3144 810px,#1b2c42 860px,#182940 1000px,#16263d 1280px);"></div>
<div style="left:0px;top:769.7px;width:37px;height:30.3px;background:#203848;"></div>
<svg style="left:12.3px;top:778.8px;" width="12" height="12" viewBox="0 0 12 12"><rect x="0" y="0" width="5.5" height="5.5" fill="#fff"/><rect x="6.5" y="0" width="5.5" height="5.5" fill="#fff"/><rect x="0" y="6.5" width="5.5" height="5.5" fill="#fff"/><rect x="6.5" y="6.5" width="5.5" height="5.5" fill="#fff"/></svg>
<div style="left:37px;top:769.7px;width:219px;height:30.3px;background:#f3f3f3;"></div>
<svg style="left:45px;top:778px;" width="13" height="13" viewBox="0 0 13 13"><circle cx="8" cy="5" r="3.6" fill="none" stroke="#333" stroke-width="1.2"/><path d="M5.3 7.7 L1 12" stroke="#333" stroke-width="1.3"/></svg>
<span class="t" style="left:67.00px;top:778.94px;font-size:10.6px;line-height:12.72px;color:#3a3a3a;letter-spacing:0.190px;">Type here to search</span>
<svg style="left:196px;top:773px;" width="32" height="26" viewBox="0 0 32 26"><g><rect x="1" y="1" width="9" height="4" rx="1" fill="#2fa35a"/><rect x="1" y="6.5" width="9" height="4" rx="1" fill="#2a7fd0"/><rect x="1" y="15" width="9" height="4" rx="1" fill="#e8502a"/><rect x="1" y="20.5" width="9" height="4" rx="1" fill="#f0b020"/><rect x="16" y="3.5" width="9" height="4" rx="1" fill="#2a7fd0"/><rect x="16" y="17.5" width="9" height="4" rx="1" fill="#e8502a"/><path d="M10 3 h3 v5.5 h-3 M13 5.5 h3 M10 17 h3 v5.5 h-3 M13 19.5 h3 M25 5.5 h3 v14 h-3 M28 12.5 h3" stroke="#555" stroke-width=".9" fill="none"/></g></svg>
<svg style="left:227.5px;top:772.5px;" width="25" height="25" viewBox="0 0 25 25"><circle cx="12.5" cy="12.5" r="12" fill="#ee7a35"/><path d="M12.5 .5 V24.5 M.5 12.5 H24.5 M4 4 Q10 12.5 4 21 M21 4 Q15 12.5 21 21" stroke="#9b3f12" stroke-width="1" fill="none"/></svg>
<svg style="left:268px;top:779px;" width="12" height="12" viewBox="0 0 12 12"><rect x="1.5" y="3" width="7" height="6" fill="none" stroke="#f2f2f2" stroke-width="1.2"/><path d="M1 .8 H9 M1 11.2 H9 M11 3 V9" stroke="#f2f2f2" stroke-width="1.2"/><rect x="10.2" y=".2" width="1.6" height="1.6" fill="#f2f2f2"/><rect x="10.2" y="10.2" width="1.6" height="1.6" fill="#f2f2f2"/></svg>
<svg style="left:304px;top:776px;" width="18" height="18" viewBox="0 0 18 18"><defs><linearGradient id="eg" x1="0" y1="0" x2="1" y2="1"><stop offset="0" stop-color="#35c1b1"/><stop offset=".5" stop-color="#1e9de0"/><stop offset="1" stop-color="#0c59a4"/></linearGradient></defs><circle cx="9" cy="9" r="8.5" fill="url(#eg)"/><path d="M3.5 11 C3.5 6.5 7 4.5 10 4.5 C13.5 4.5 15.5 7 15 9.5 C14.6 11 13 11.6 11.5 11.3 C12.3 10.3 12 8.6 10.3 8 C8 7.3 6 9 6.3 11.6 C6.6 14 8.6 15.8 11 16 C7 17 3.5 14.5 3.5 11Z" fill="#153a7a" opacity=".55"/><path d="M1 8 C2.5 3.5 7 1.5 11 2.5 C14.5 3.5 17 6.5 17 9.8 C16.5 7 13.5 5 10.5 5.2 C7 5.5 4.2 7.8 3.6 11 C3 9 1.5 8.5 1 8Z" fill="#54e0a0" opacity=".55"/></svg>
<svg style="left:341px;top:776px;" width="18" height="18" viewBox="0 0 18 18"><circle cx="9" cy="9" r="8.5" fill="#ea4335"/><path d="M9 9 L1.64 13.25 A8.5 8.5 0 0 0 9.8 17.46 L13.2 11.4Z" fill="#34a853"/><path d="M9 9 L13.25 11.4 L9.8 17.46 A8.5 8.5 0 0 0 16.36 4.75 H9Z" fill="#fbbc05"/><path d="M1.64 13.25 A8.5 8.5 0 0 1 1.64 4.75 L5.3 11Z" fill="#34a853"/><circle cx="9" cy="9" r="4.2" fill="#fff"/><circle cx="9" cy="9" r="3.3" fill="#4285f4"/></svg>
<div style="left:335px;top:798px;width:30px;height:2px;background:#8fc4ea;"></div>
<svg style="left:379px;top:777.5px;" width="17" height="15" viewBox="0 0 17 15"><path d="M.5 1.5 H6 L7.5 3 H16.5 V14.5 H.5Z" fill="#f5b92e"/><path d="M.5 5 H16.5 V14.5 H.5Z" fill="#fbd45c"/><path d="M5 9.5 H12 V14.5 H5Z" fill="#3a8fd8"/><path d="M7 11.5 H10 V14.5 H7Z" fill="#fbd45c"/></svg>
<div style="left:372px;top:798px;width:31px;height:2px;background:#8fc4ea;"></div>
<div style="left:407px;top:769.7px;width:33px;height:30.3px;background:#6a6a6a;"></div>
<svg style="left:415.5px;top:776px;" width="19" height="19" viewBox="0 0 19 19"><path d="M1.5 5 L9.5 1 L17.5 4.5 L17.5 13 L9.5 17 L1.5 13.5Z" fill="#c8201f"/><path d="M1.5 5 L9.5 8.3 L17.5 4.5 L9.5 1Z" fill="#e8483f"/><path d="M9.5 8.3V17" stroke="#8f1010" stroke-width=".7"/></svg>
<span class="t" style="left:418.00px;top:779.00px;font-size:7.5px;line-height:9.00px;color:#fff;font-weight:bold;">S</span>
<span class="t" style="left:425.76px;top:778.50px;font-size:7.5px;line-height:9.00px;color:#fff;font-weight:bold;">W</span>
<span class="t" style="left:420.22px;top:788.38px;font-size:5.2px;line-height:6.24px;color:#fff;font-weight:bold;">2017</span>
<div style="left:407px;top:798px;width:33px;height:2px;background:#8fc4ea;"></div>
<svg style="left:981px;top:777.5px;" width="16.5" height="15" viewBox="0 0 16.5 15"><rect x=".5" y="2" width="15.5" height="12.5" rx="1.5" fill="#f8f8f8"/><rect x=".5" y="1" width="15.5" height="4" rx="1.3" fill="#e8486a"/><rect x="2.5" y="7" width="5" height="5.5" fill="#555"/><path d="M9 7.7h5M9 10h5M9 12h3" stroke="#555" stroke-width="1.1"/></svg>
<span class="t" style="left:1005.00px;top:779.14px;font-size:10.6px;line-height:12.72px;color:#ffffff;letter-spacing:-0.156px;">Breaking news</span>
<svg style="left:1091px;top:781.5px;" width="10" height="6.5" viewBox="0 0 10 6.5"><path d="M1 5.8 L5 1.3 L9 5.8" stroke="#f4f4f4" stroke-width="1.3" fill="none"/></svg>
<svg style="left:1110px;top:778px;" width="11" height="14" viewBox="0 0 11 14"><rect x="1.5" y="3.5" width="6.5" height="7" rx="1.5" fill="none" stroke="#f0f0f0" stroke-width="1"/><path d="M8 6 L10 4.8 V9.2 L8 8Z" fill="#f0f0f0"/><path d="M3 1.2 Q5 .2 7 1.2 M3 12.8 Q5 13.8 7 12.8" stroke="#f0f0f0" stroke-width=".9" fill="none"/></svg>
<svg style="left:1128px;top:779px;" width="12" height="12" viewBox="0 0 12 12"><path d="M1.5 10.5 A9 9 0 0 1 10.5 1.5" stroke="#8f9aa8" stroke-width="1" fill="none"/><path d="M4 10.5 A6.5 6.5 0 0 1 10.5 4" stroke="#e8e8e8" stroke-width="1" fill="none"/><path d="M6.5 10.5 A4 4 0 0 1 10.5 6.5" stroke="#e8e8e8" stroke-width="1" fill="none"/><circle cx="10" cy="10" r="1.2" fill="#f0f0f0"/></svg>
<svg style="left:1144px;top:779.5px;" width="13" height="11" viewBox="0 0 13 11"><path d="M.8 3.7 H3.3 L6.3 1 V10 L3.3 7.3 H.8Z" fill="none" stroke="#f0f0f0" stroke-width="1"/><path d="M8 3.5 Q9.5 5.5 8 7.5 M9.8 2 Q12.3 5.5 9.8 9" stroke="#d8d8d8" stroke-width=".9" fill="none"/></svg>
<span class="t" style="left:1166.50px;top:772.42px;font-size:9.3px;line-height:11.16px;color:#fff;letter-spacing:-0.263px;">11:17 AM</span>
<span class="t" style="left:1165.00px;top:786.12px;font-size:9.3px;line-height:11.16px;color:#fff;letter-spacing:-0.208px;">3/22/2024</span>
<svg style="left:1217px;top:778px;" width="17" height="17" viewBox="0 0 17 17"><path d="M1 1 H13.5 V10 H6.5 L3.5 13 V10 H1Z" fill="#f4f4f4"/><path d="M3 3.7h8.5M3 6h8.5" stroke="#1b2c42" stroke-width="1"/><circle cx="12.3" cy="12" r="4.3" fill="#1b2c42" stroke="#f4f4f4" stroke-width=".9"/></svg>
<span class="t" style="left:1227.35px;top:786.00px;font-size:7px;line-height:8.40px;color:#fff;font-weight:bold;">7</span>
<svg style="left:1246px;top:776px;" width="18" height="18" viewBox="0 0 18 18"><defs><linearGradient id="cg" x1="0" y1="0" x2="1" y2="1"><stop offset="0" stop-color="#2aa7f0"/><stop offset=".35" stop-color="#7a5af0"/><stop offset=".65" stop-color="#e8508a"/><stop offset="1" stop-color="#f5b31e"/></linearGradient></defs><path d="M4.5 1.5 H10 Q12 1.5 12.6 3.5 L13.2 5.5 H15 Q17.5 5.5 16.5 8.5 L15 13.5 Q14.3 15.5 12.3 15.5 H7 Q5 15.5 4.5 13.5 L4 11.5 H2.5 Q.3 11.5 1 9 L2.5 3.5 Q3 1.5 4.5 1.5Z" fill="url(#cg)"/><rect x="7" y="11.5" width="10" height="5" rx="1" fill="#f5c518"/></svg>
<span class="t" style="left:1254.09px;top:787.72px;font-size:3.8px;line-height:4.56px;color:#222;font-weight:bold;">PRE</span>
</div></body></html>
